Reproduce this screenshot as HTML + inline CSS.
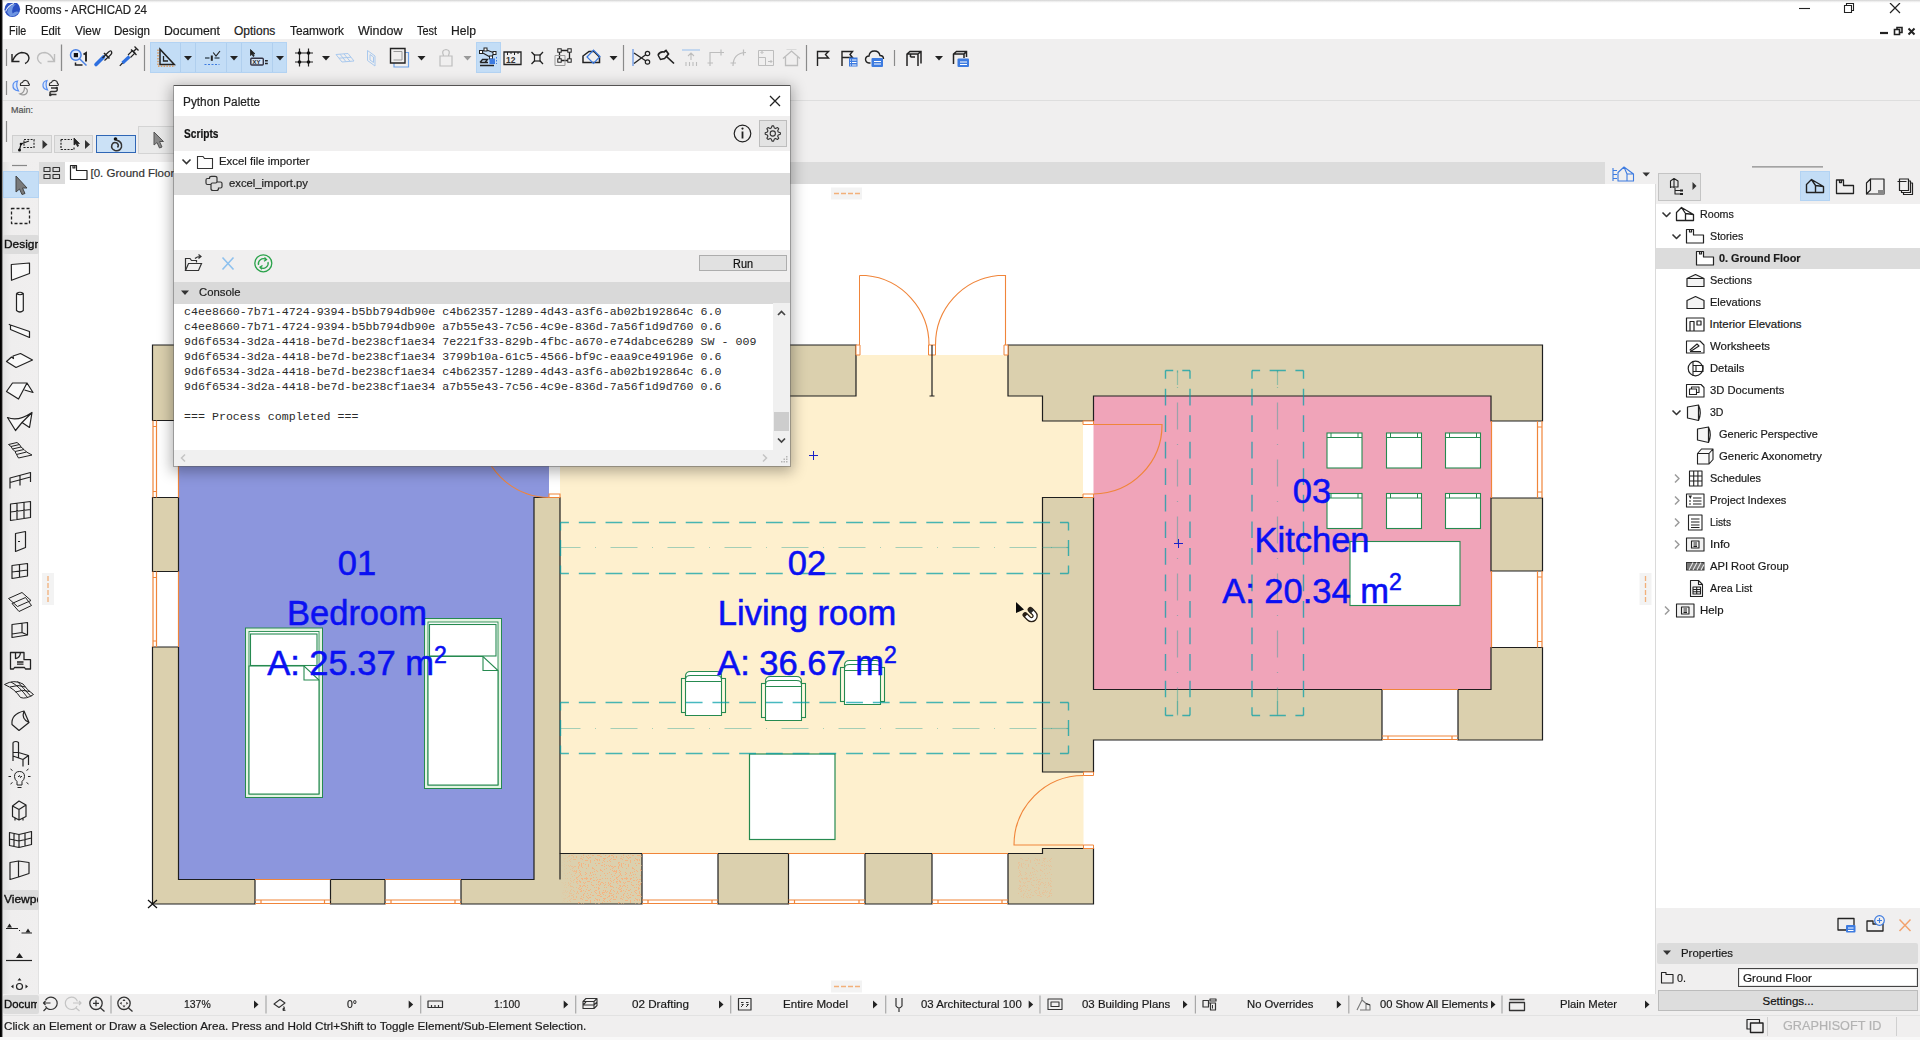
<!DOCTYPE html>
<html lang="en">
<head>
<meta charset="utf-8">
<title>Rooms - ARCHICAD 24</title>
<style>
*{box-sizing:border-box;margin:0;padding:0}
html,body{width:1920px;height:1040px;overflow:hidden;background:#fff}
body{position:relative;font-family:"Liberation Sans",sans-serif;font-size:12px;color:#1a1a1a}
.abs{position:absolute}
.t{position:absolute;white-space:nowrap;line-height:1;transform-origin:0 50%;-webkit-text-stroke:0.2px currentColor}
#chrome{left:0;top:39px;width:1920px;height:123px;background:#f0efef}
#leftedge{left:0;top:0;width:3px;height:1037px;background:linear-gradient(90deg,#000 0,#000 45%,#d5d5d5 100%)}
#topedge{left:0;top:0;width:1920px;height:3px;background:linear-gradient(180deg,#d2d2d2 0,#f4f4f4 60%,#fff 100%)}
#toolbox{left:3px;top:162px;width:36px;height:832px;background:linear-gradient(90deg,#e2e2e2 0,#efeeee 22%,#f0efef 100%)}
#tabbar{left:39px;top:162px;width:1616px;height:22px;background:#dcdcdc}
#canvas{left:39px;top:184px;width:1616px;height:810px;background:#fff}
#rpanel{left:1655px;top:162px;width:265px;height:853px;background:#f0efef}
#bottombar{left:3px;top:994px;width:1652px;height:22px;background:#f0efef}
#statusbar{left:0;top:1015px;width:1920px;height:25px;background:#f0efef}
svg{position:absolute;left:0;top:0;overflow:visible}
</style>
</head>
<body>
<!-- TITLE + MENU -->
<div class="abs" id="titlebar" style="left:0;top:0;width:1920px;height:39px;background:#fff"></div>
<div class="abs" id="chrome"></div>
<div class="abs" id="tabbar"></div>
<div class="abs" id="canvas"></div>
<div class="abs" id="toolbox"></div>
<div class="abs" id="rpanel"></div>
<div class="abs" id="bottombar"></div>
<div class="abs" id="statusbar"></div>
<svg id="plan" width="1920" height="1040" viewBox="0 0 1920 1040">
<path d="M178.5 396H549V497.5H534V879.5H178.5Z" fill="#8c96dd"/>
<path d="M560 396H856V355H1008V396H1042.5V421H1083V497.5H1042.5V772H1083.5V848.5H1042.5V853.5H560Z" fill="#fef0ce"/>
<rect x="1093.5" y="396" width="397.5" height="293.5" fill="#f0a4b9"/>
<path d="M152.5 345 L856 345 L856 396 L178.5 396 L178.5 420.5 L152.5 420.5Z" fill="#dbd0ae" stroke="#1e1e1e" stroke-width="1.2" stroke-linejoin="miter"/>
<path d="M152.5 497.5 L178.5 497.5 L178.5 571.5 L152.5 571.5Z" fill="#dbd0ae" stroke="#1e1e1e" stroke-width="1.2" stroke-linejoin="miter"/>
<path d="M152.5 647 L178.5 647 L178.5 879.5 L255 879.5 L255 904 L152.5 904Z" fill="#dbd0ae" stroke="#1e1e1e" stroke-width="1.2" stroke-linejoin="miter"/>
<path d="M330.5 879.5 L385 879.5 L385 904 L330.5 904Z" fill="#dbd0ae" stroke="#1e1e1e" stroke-width="1.2" stroke-linejoin="miter"/>
<path d="M461 879.5 L534 879.5 L534 497.5 L560 497.5 L560 853.5 L642 853.5 L642 904 L461 904Z" fill="#dbd0ae" stroke="#1e1e1e" stroke-width="1.2" stroke-linejoin="miter"/>
<path d="M560 853.5V879.5" stroke="#1e1e1e" stroke-width="1.2"/>
<path d="M718 853.5 L788.5 853.5 L788.5 904 L718 904Z" fill="#dbd0ae" stroke="#1e1e1e" stroke-width="1.2" stroke-linejoin="miter"/>
<path d="M865 853.5 L932 853.5 L932 904 L865 904Z" fill="#dbd0ae" stroke="#1e1e1e" stroke-width="1.2" stroke-linejoin="miter"/>
<path d="M1008 853.5 L1042.5 853.5 L1042.5 848.5 L1093.5 848.5 L1093.5 904 L1008 904Z" fill="#dbd0ae" stroke="#1e1e1e" stroke-width="1.2" stroke-linejoin="miter"/>
<path d="M1008 345 L1542.5 345 L1542.5 421 L1491 421 L1491 396 L1093.5 396 L1093.5 421 L1042.5 421 L1042.5 396 L1008 396Z" fill="#dbd0ae" stroke="#1e1e1e" stroke-width="1.2" stroke-linejoin="miter"/>
<path d="M1042.5 497.5 L1093.5 497.5 L1093.5 689.5 L1382 689.5 L1382 740 L1093.5 740 L1093.5 772 L1042.5 772Z" fill="#dbd0ae" stroke="#1e1e1e" stroke-width="1.2" stroke-linejoin="miter"/>
<path d="M1491 498 L1542.5 498 L1542.5 571 L1491 571Z" fill="#dbd0ae" stroke="#1e1e1e" stroke-width="1.2" stroke-linejoin="miter"/>
<path d="M1491 647.5 L1542.5 647.5 L1542.5 740 L1458 740 L1458 689.5 L1491 689.5Z" fill="#dbd0ae" stroke="#1e1e1e" stroke-width="1.2" stroke-linejoin="miter"/>
<defs><pattern id="stip" width="40" height="40" patternUnits="userSpaceOnUse"><g fill="#f4b483"><rect x="15" y="19" width="1" height="1"/><rect x="6" y="25" width="1" height="1"/><rect x="30" y="9" width="1" height="1"/><rect x="5" y="4" width="1" height="1"/><rect x="1" y="25" width="1" height="1"/><rect x="35" y="18" width="1" height="1"/><rect x="3" y="14" width="1" height="1"/><rect x="33" y="34" width="1" height="1"/><rect x="23" y="17" width="1" height="1"/><rect x="11" y="6" width="1" height="1"/><rect x="16" y="13" width="1" height="1"/><rect x="1" y="16" width="1" height="1"/><rect x="17" y="12" width="1" height="1"/><rect x="10" y="19" width="1" height="1"/><rect x="18" y="23" width="1" height="1"/><rect x="5" y="38" width="1" height="1"/><rect x="21" y="24" width="1" height="1"/><rect x="32" y="15" width="1" height="1"/><rect x="11" y="15" width="1" height="1"/><rect x="30" y="17" width="1" height="1"/><rect x="5" y="35" width="1" height="1"/><rect x="19" y="0" width="1" height="1"/><rect x="18" y="36" width="1" height="1"/><rect x="19" y="32" width="1" height="1"/><rect x="12" y="26" width="1" height="1"/><rect x="27" y="38" width="1" height="1"/><rect x="18" y="27" width="1" height="1"/><rect x="28" y="10" width="1" height="1"/><rect x="14" y="19" width="1" height="1"/><rect x="16" y="2" width="1" height="1"/><rect x="5" y="2" width="1" height="1"/><rect x="29" y="17" width="1" height="1"/><rect x="33" y="34" width="1" height="1"/><rect x="30" y="21" width="1" height="1"/><rect x="9" y="12" width="1" height="1"/><rect x="4" y="26" width="1" height="1"/><rect x="12" y="28" width="1" height="1"/><rect x="17" y="11" width="1" height="1"/><rect x="22" y="27" width="1" height="1"/><rect x="37" y="20" width="1" height="1"/><rect x="35" y="12" width="1" height="1"/><rect x="20" y="6" width="1" height="1"/><rect x="3" y="14" width="1" height="1"/><rect x="17" y="37" width="1" height="1"/><rect x="39" y="15" width="1" height="1"/><rect x="7" y="21" width="1" height="1"/><rect x="11" y="18" width="1" height="1"/><rect x="29" y="1" width="1" height="1"/><rect x="2" y="22" width="1" height="1"/><rect x="5" y="18" width="1" height="1"/><rect x="20" y="1" width="1" height="1"/><rect x="20" y="18" width="1" height="1"/><rect x="20" y="9" width="1" height="1"/><rect x="26" y="39" width="1" height="1"/><rect x="4" y="18" width="1" height="1"/><rect x="39" y="12" width="1" height="1"/><rect x="28" y="18" width="1" height="1"/><rect x="8" y="16" width="1" height="1"/><rect x="24" y="38" width="1" height="1"/><rect x="10" y="21" width="1" height="1"/><rect x="36" y="0" width="1" height="1"/><rect x="23" y="2" width="1" height="1"/><rect x="29" y="10" width="1" height="1"/><rect x="23" y="23" width="1" height="1"/><rect x="18" y="36" width="1" height="1"/><rect x="6" y="28" width="1" height="1"/><rect x="13" y="27" width="1" height="1"/><rect x="13" y="7" width="1" height="1"/><rect x="3" y="3" width="1" height="1"/><rect x="3" y="10" width="1" height="1"/><rect x="38" y="9" width="1" height="1"/><rect x="38" y="2" width="1" height="1"/><rect x="34" y="31" width="1" height="1"/><rect x="37" y="15" width="1" height="1"/><rect x="20" y="2" width="1" height="1"/><rect x="7" y="33" width="1" height="1"/><rect x="18" y="26" width="1" height="1"/><rect x="12" y="30" width="1" height="1"/><rect x="12" y="15" width="1" height="1"/><rect x="28" y="26" width="1" height="1"/><rect x="31" y="2" width="1" height="1"/><rect x="14" y="26" width="1" height="1"/><rect x="28" y="15" width="1" height="1"/><rect x="27" y="13" width="1" height="1"/><rect x="31" y="12" width="1" height="1"/><rect x="2" y="2" width="1" height="1"/><rect x="16" y="16" width="1" height="1"/><rect x="15" y="33" width="1" height="1"/><rect x="13" y="14" width="1" height="1"/><rect x="26" y="16" width="1" height="1"/><rect x="9" y="20" width="1" height="1"/><rect x="3" y="20" width="1" height="1"/><rect x="36" y="7" width="1" height="1"/><rect x="36" y="25" width="1" height="1"/><rect x="2" y="31" width="1" height="1"/><rect x="24" y="5" width="1" height="1"/><rect x="27" y="13" width="1" height="1"/><rect x="36" y="10" width="1" height="1"/><rect x="21" y="18" width="1" height="1"/><rect x="30" y="20" width="1" height="1"/><rect x="26" y="33" width="1" height="1"/><rect x="13" y="17" width="1" height="1"/><rect x="21" y="25" width="1" height="1"/><rect x="31" y="4" width="1" height="1"/><rect x="17" y="12" width="1" height="1"/><rect x="2" y="25" width="1" height="1"/><rect x="39" y="8" width="1" height="1"/><rect x="17" y="3" width="1" height="1"/><rect x="10" y="29" width="1" height="1"/><rect x="36" y="30" width="1" height="1"/><rect x="25" y="24" width="1" height="1"/><rect x="13" y="0" width="1" height="1"/><rect x="13" y="10" width="1" height="1"/><rect x="0" y="39" width="1" height="1"/><rect x="16" y="7" width="1" height="1"/><rect x="25" y="24" width="1" height="1"/><rect x="14" y="35" width="1" height="1"/><rect x="3" y="12" width="1" height="1"/><rect x="10" y="38" width="1" height="1"/><rect x="21" y="35" width="1" height="1"/><rect x="30" y="33" width="1" height="1"/><rect x="28" y="1" width="1" height="1"/><rect x="5" y="2" width="1" height="1"/><rect x="38" y="7" width="1" height="1"/><rect x="31" y="35" width="1" height="1"/><rect x="16" y="38" width="1" height="1"/><rect x="8" y="2" width="1" height="1"/><rect x="23" y="5" width="1" height="1"/><rect x="33" y="0" width="1" height="1"/><rect x="19" y="22" width="1" height="1"/><rect x="4" y="5" width="1" height="1"/><rect x="34" y="29" width="1" height="1"/><rect x="24" y="13" width="1" height="1"/><rect x="19" y="24" width="1" height="1"/><rect x="14" y="31" width="1" height="1"/><rect x="25" y="6" width="1" height="1"/><rect x="4" y="7" width="1" height="1"/><rect x="39" y="23" width="1" height="1"/><rect x="32" y="27" width="1" height="1"/><rect x="26" y="28" width="1" height="1"/><rect x="4" y="12" width="1" height="1"/><rect x="19" y="30" width="1" height="1"/><rect x="27" y="7" width="1" height="1"/><rect x="35" y="10" width="1" height="1"/><rect x="23" y="10" width="1" height="1"/><rect x="11" y="9" width="1" height="1"/><rect x="20" y="31" width="1" height="1"/><rect x="21" y="16" width="1" height="1"/><rect x="34" y="0" width="1" height="1"/><rect x="10" y="0" width="1" height="1"/><rect x="19" y="7" width="1" height="1"/><rect x="34" y="7" width="1" height="1"/><rect x="31" y="38" width="1" height="1"/><rect x="30" y="33" width="1" height="1"/><rect x="4" y="33" width="1" height="1"/><rect x="15" y="26" width="1" height="1"/><rect x="18" y="22" width="1" height="1"/><rect x="14" y="11" width="1" height="1"/><rect x="0" y="3" width="1" height="1"/><rect x="39" y="20" width="1" height="1"/><rect x="34" y="29" width="1" height="1"/><rect x="36" y="19" width="1" height="1"/><rect x="32" y="28" width="1" height="1"/><rect x="39" y="39" width="1" height="1"/><rect x="28" y="25" width="1" height="1"/><rect x="9" y="16" width="1" height="1"/><rect x="38" y="23" width="1" height="1"/><rect x="21" y="8" width="1" height="1"/><rect x="27" y="5" width="1" height="1"/><rect x="38" y="9" width="1" height="1"/><rect x="39" y="11" width="1" height="1"/><rect x="18" y="23" width="1" height="1"/><rect x="12" y="36" width="1" height="1"/><rect x="22" y="39" width="1" height="1"/><rect x="5" y="4" width="1" height="1"/><rect x="25" y="11" width="1" height="1"/><rect x="21" y="23" width="1" height="1"/><rect x="20" y="11" width="1" height="1"/><rect x="19" y="1" width="1" height="1"/><rect x="38" y="1" width="1" height="1"/><rect x="33" y="5" width="1" height="1"/><rect x="22" y="6" width="1" height="1"/><rect x="10" y="11" width="1" height="1"/><rect x="37" y="31" width="1" height="1"/><rect x="36" y="4" width="1" height="1"/><rect x="7" y="11" width="1" height="1"/><rect x="30" y="14" width="1" height="1"/><rect x="39" y="19" width="1" height="1"/><rect x="25" y="38" width="1" height="1"/><rect x="15" y="31" width="1" height="1"/><rect x="14" y="19" width="1" height="1"/><rect x="23" y="14" width="1" height="1"/><rect x="20" y="34" width="1" height="1"/><rect x="33" y="28" width="1" height="1"/><rect x="25" y="32" width="1" height="1"/><rect x="25" y="20" width="1" height="1"/><rect x="18" y="28" width="1" height="1"/><rect x="26" y="37" width="1" height="1"/><rect x="0" y="16" width="1" height="1"/><rect x="11" y="34" width="1" height="1"/><rect x="29" y="35" width="1" height="1"/><rect x="39" y="23" width="1" height="1"/><rect x="25" y="24" width="1" height="1"/><rect x="39" y="1" width="1" height="1"/><rect x="9" y="32" width="1" height="1"/><rect x="4" y="29" width="1" height="1"/><rect x="22" y="38" width="1" height="1"/><rect x="19" y="5" width="1" height="1"/><rect x="16" y="30" width="1" height="1"/><rect x="14" y="30" width="1" height="1"/><rect x="38" y="4" width="1" height="1"/><rect x="9" y="15" width="1" height="1"/><rect x="4" y="19" width="1" height="1"/><rect x="8" y="3" width="1" height="1"/><rect x="10" y="25" width="1" height="1"/><rect x="37" y="39" width="1" height="1"/><rect x="35" y="34" width="1" height="1"/><rect x="16" y="1" width="1" height="1"/><rect x="33" y="15" width="1" height="1"/><rect x="10" y="6" width="1" height="1"/><rect x="13" y="2" width="1" height="1"/><rect x="20" y="5" width="1" height="1"/><rect x="7" y="17" width="1" height="1"/><rect x="3" y="18" width="1" height="1"/><rect x="39" y="11" width="1" height="1"/><rect x="9" y="26" width="1" height="1"/><rect x="8" y="5" width="1" height="1"/><rect x="35" y="23" width="1" height="1"/><rect x="0" y="35" width="1" height="1"/><rect x="9" y="32" width="1" height="1"/><rect x="26" y="9" width="1" height="1"/><rect x="13" y="19" width="1" height="1"/><rect x="30" y="32" width="1" height="1"/><rect x="4" y="24" width="1" height="1"/><rect x="10" y="10" width="1" height="1"/><rect x="16" y="32" width="1" height="1"/><rect x="25" y="34" width="1" height="1"/><rect x="19" y="25" width="1" height="1"/><rect x="21" y="10" width="1" height="1"/><rect x="24" y="3" width="1" height="1"/><rect x="27" y="1" width="1" height="1"/><rect x="17" y="1" width="1" height="1"/><rect x="19" y="9" width="1" height="1"/><rect x="5" y="10" width="1" height="1"/><rect x="7" y="38" width="1" height="1"/><rect x="0" y="14" width="1" height="1"/><rect x="14" y="35" width="1" height="1"/><rect x="0" y="30" width="1" height="1"/><rect x="34" y="11" width="1" height="1"/><rect x="28" y="24" width="1" height="1"/><rect x="21" y="11" width="1" height="1"/><rect x="33" y="37" width="1" height="1"/><rect x="12" y="6" width="1" height="1"/><rect x="30" y="39" width="1" height="1"/><rect x="22" y="19" width="1" height="1"/><rect x="26" y="38" width="1" height="1"/><rect x="2" y="13" width="1" height="1"/><rect x="16" y="37" width="1" height="1"/><rect x="37" y="19" width="1" height="1"/><rect x="30" y="21" width="1" height="1"/><rect x="5" y="15" width="1" height="1"/><rect x="20" y="6" width="1" height="1"/><rect x="2" y="38" width="1" height="1"/><rect x="20" y="33" width="1" height="1"/><rect x="30" y="22" width="1" height="1"/><rect x="5" y="11" width="1" height="1"/><rect x="2" y="31" width="1" height="1"/><rect x="33" y="34" width="1" height="1"/><rect x="38" y="15" width="1" height="1"/><rect x="2" y="12" width="1" height="1"/><rect x="4" y="21" width="1" height="1"/><rect x="38" y="8" width="1" height="1"/><rect x="19" y="7" width="1" height="1"/><rect x="32" y="32" width="1" height="1"/><rect x="0" y="4" width="1" height="1"/><rect x="14" y="39" width="1" height="1"/><rect x="17" y="39" width="1" height="1"/><rect x="1" y="2" width="1" height="1"/><rect x="0" y="30" width="1" height="1"/><rect x="9" y="13" width="1" height="1"/><rect x="23" y="15" width="1" height="1"/><rect x="22" y="19" width="1" height="1"/><rect x="24" y="38" width="1" height="1"/><rect x="25" y="2" width="1" height="1"/><rect x="11" y="26" width="1" height="1"/><rect x="31" y="4" width="1" height="1"/><rect x="32" y="32" width="1" height="1"/><rect x="19" y="35" width="1" height="1"/><rect x="18" y="13" width="1" height="1"/><rect x="27" y="20" width="1" height="1"/><rect x="11" y="13" width="1" height="1"/><rect x="1" y="30" width="1" height="1"/><rect x="27" y="17" width="1" height="1"/><rect x="21" y="26" width="1" height="1"/><rect x="26" y="20" width="1" height="1"/><rect x="39" y="13" width="1" height="1"/><rect x="16" y="17" width="1" height="1"/><rect x="32" y="5" width="1" height="1"/><rect x="1" y="25" width="1" height="1"/><rect x="16" y="38" width="1" height="1"/><rect x="18" y="8" width="1" height="1"/><rect x="39" y="20" width="1" height="1"/><rect x="5" y="10" width="1" height="1"/><rect x="39" y="5" width="1" height="1"/><rect x="13" y="16" width="1" height="1"/><rect x="13" y="31" width="1" height="1"/><rect x="7" y="21" width="1" height="1"/><rect x="0" y="29" width="1" height="1"/><rect x="36" y="13" width="1" height="1"/><rect x="10" y="5" width="1" height="1"/><rect x="15" y="33" width="1" height="1"/><rect x="6" y="7" width="1" height="1"/><rect x="20" y="18" width="1" height="1"/><rect x="36" y="37" width="1" height="1"/><rect x="9" y="4" width="1" height="1"/><rect x="11" y="1" width="1" height="1"/><rect x="11" y="13" width="1" height="1"/><rect x="16" y="2" width="1" height="1"/><rect x="37" y="20" width="1" height="1"/><rect x="21" y="38" width="1" height="1"/><rect x="23" y="10" width="1" height="1"/><rect x="10" y="13" width="1" height="1"/><rect x="3" y="3" width="1" height="1"/><rect x="10" y="3" width="1" height="1"/><rect x="16" y="31" width="1" height="1"/><rect x="6" y="12" width="1" height="1"/><rect x="8" y="25" width="1" height="1"/><rect x="30" y="38" width="1" height="1"/><rect x="34" y="31" width="1" height="1"/><rect x="34" y="20" width="1" height="1"/></g></pattern><linearGradient id="fadeL" x1="0" x2="1"><stop offset="0" stop-color="#fff" stop-opacity="0"/><stop offset=".25" stop-color="#fff"/><stop offset="1" stop-color="#fff"/></linearGradient><mask id="m1"><rect x="560" y="854" width="82" height="50" fill="url(#fadeL)"/></mask></defs>
<rect x="561" y="854.5" width="80.500" height="49" fill="url(#stip)" mask="url(#m1)"/>
<rect x="1018" y="858" width="34" height="40" fill="url(#stip)" opacity=".45"/>
<path d="M255 879.5H330.5M255 900H330.5M255 903.5H330.5M261 900V903.5M324.5 900V903.5" stroke="#f0853a" stroke-width="1.2" fill="none"/>
<path d="M385 879.5H461M385 900H461M385 903.5H461M391 900V903.5M455 900V903.5" stroke="#f0853a" stroke-width="1.2" fill="none"/>
<path d="M642 853.5H718M642 900H718M642 903.5H718M648 900V903.5M712 900V903.5" stroke="#f0853a" stroke-width="1.2" fill="none"/>
<path d="M788.5 853.5H865M788.5 900H865M788.5 903.5H865M794.5 900V903.5M859 900V903.5" stroke="#f0853a" stroke-width="1.2" fill="none"/>
<path d="M932 853.5H1008M932 900H1008M932 903.5H1008M938 900V903.5M1002 900V903.5" stroke="#f0853a" stroke-width="1.2" fill="none"/>
<path d="M1382 689.5H1458M1382 736H1458M1382 739.5H1458M1388 736V739.5M1452 736V739.5" stroke="#f0853a" stroke-width="1.2" fill="none"/>
<path d="M178.5 420.5V497.5M153 420.5V497.5M156.5 420.5V497.5M153 426.5H156.5M153 491.5H156.5" stroke="#f0853a" stroke-width="1.2" fill="none"/>
<path d="M178.5 571.5V647M153 571.5V647M156.5 571.5V647M153 577.5H156.5M153 641H156.5" stroke="#f0853a" stroke-width="1.2" fill="none"/>
<path d="M1491.5 421V498M1542 421V498M1537.5 421V498M1542 427H1537.5M1542 492H1537.5" stroke="#f0853a" stroke-width="1.2" fill="none"/>
<path d="M1491.5 571V647.5M1542 571V647.5M1537.5 571V647.5M1542 577H1537.5M1542 641.5H1537.5" stroke="#f0853a" stroke-width="1.2" fill="none"/>
<path d="M856 345H860V355H856ZM928.5 345H935.5V355H928.5ZM1004 345H1008V355H1004Z" fill="#fff" stroke="#f0853a" stroke-width="1"/>
<path d="M859.5 345V275.5H866M859.5 275.5" stroke="#f0853a" fill="none"/>
<path d="M866 275.5A69.5 69.5 0 0 1 929 345M998 275.5A69.5 69.5 0 0 0 935.5 345M998 275.5H1005.5V345" stroke="#f0853a" fill="none" stroke-width="1.1"/>
<path d="M932 345V396M929.5 396H934.5" stroke="#1e1e1e" stroke-width="1.2" fill="none"/>
<path d="M1083 421H1093.5V424.5H1083ZM1083 494H1093.5V497.5H1083Z" fill="#fff" stroke="#f0853a" stroke-width="1"/>
<path d="M1093.5 424.5H1162A69 69 0 0 1 1093.5 494" stroke="#f0853a" fill="none" stroke-width="1.2"/>
<path d="M1083.5 772H1093.5V775.5H1083.5ZM1083.5 845H1093.5V848.5H1083.5Z" fill="#fff" stroke="#f0853a" stroke-width="1"/>
<path d="M1083.5 775.5A69.5 69.5 0 0 0 1014 845H1083.5" stroke="#f0853a" fill="none" stroke-width="1.1"/>
<path d="M549 497.5A70 70 0 0 1 480 428M549 494H560V497.5H549Z" stroke="#f0853a" fill="none" stroke-width="1.1"/>
<rect x="245.5" y="628" width="77" height="169.5" fill="#e4f5e2" stroke="#268a50" stroke-width="1"/>
<rect x="249.0" y="631.5" width="70" height="162.5" fill="#fff" stroke="#268a50" stroke-width="0.9"/>
<rect x="250.5" y="634" width="66.5" height="31.5" fill="#fff" stroke="#268a50" stroke-width="1.1"/>
<path d="M249.0 666H304.0L319.0 680V794.0H249.0Z" fill="#fff" stroke="#268a50" stroke-width="1.1"/>
<path d="M304.0 666V680H319.0" fill="none" stroke="#268a50" stroke-width="1.1"/>
<rect x="424.5" y="618.5" width="77" height="170" fill="#e4f5e2" stroke="#268a50" stroke-width="1"/>
<rect x="428.0" y="622.0" width="70" height="163" fill="#fff" stroke="#268a50" stroke-width="0.9"/>
<rect x="429.5" y="624.5" width="66.5" height="31.5" fill="#fff" stroke="#268a50" stroke-width="1.1"/>
<path d="M428.0 656.5H483.0L498.0 670.5V785.0H428.0Z" fill="#fff" stroke="#268a50" stroke-width="1.1"/>
<path d="M483.0 656.5V670.5H498.0" fill="none" stroke="#268a50" stroke-width="1.1"/>
<rect x="681.5" y="678.5" width="44" height="34" fill="#fff8e2" stroke="#268a50" stroke-width="1.1"/>
<path d="M685.5 715.5V676.5Q685.5 671.5 690.5 671.5H716.5Q721.5 671.5 721.5 676.5V715.5Z" fill="#fff" stroke="#268a50" stroke-width="1.1"/>
<path d="M685.5 679.5Q685.5 675.5 690.5 675.5H716.5Q721.5 675.5 721.5 679.5M685.5 681.5H721.5" fill="none" stroke="#268a50" stroke-width="1.1"/>
<rect x="761.5" y="683.5" width="44" height="34" fill="#fff8e2" stroke="#268a50" stroke-width="1.1"/>
<path d="M765.5 720.5V681.5Q765.5 676.5 770.5 676.5H796.5Q801.5 676.5 801.5 681.5V720.5Z" fill="#fff" stroke="#268a50" stroke-width="1.1"/>
<path d="M765.5 684.5Q765.5 680.5 770.5 680.5H796.5Q801.5 680.5 801.5 684.5M765.5 686.5H801.5" fill="none" stroke="#268a50" stroke-width="1.1"/>
<rect x="840.5" y="667.5" width="44" height="34" fill="#fff8e2" stroke="#268a50" stroke-width="1.1"/>
<path d="M844.5 704.5V665.5Q844.5 660.5 849.5 660.5H875.5Q880.5 660.5 880.5 665.5V704.5Z" fill="#fff" stroke="#268a50" stroke-width="1.1"/>
<path d="M844.5 668.5Q844.5 664.5 849.5 664.5H875.5Q880.5 664.5 880.5 668.5M844.5 670.5H880.5" fill="none" stroke="#268a50" stroke-width="1.1"/>
<rect x="749.5" y="754" width="85.5" height="85.5" fill="#fff" stroke="#268a50" stroke-width="1.2"/>
<rect x="1327" y="433" width="35" height="35" fill="#fff" stroke="#268a50" stroke-width="1.1"/>
<path d="M1327 437.5H1362M1331 433V437.5M1358 433V437.5" stroke="#268a50" stroke-width="1" fill="none"/>
<rect x="1327" y="493.5" width="35" height="35" fill="#fff" stroke="#268a50" stroke-width="1.1"/>
<path d="M1327 498.0H1362M1331 493.5V498.0M1358 493.5V498.0" stroke="#268a50" stroke-width="1" fill="none"/>
<rect x="1386.5" y="433" width="35" height="35" fill="#fff" stroke="#268a50" stroke-width="1.1"/>
<path d="M1386.5 437.5H1421.5M1390.5 433V437.5M1417.5 433V437.5" stroke="#268a50" stroke-width="1" fill="none"/>
<rect x="1386.5" y="493.5" width="35" height="35" fill="#fff" stroke="#268a50" stroke-width="1.1"/>
<path d="M1386.5 498.0H1421.5M1390.5 493.5V498.0M1417.5 493.5V498.0" stroke="#268a50" stroke-width="1" fill="none"/>
<rect x="1445.5" y="433" width="35" height="35" fill="#fff" stroke="#268a50" stroke-width="1.1"/>
<path d="M1445.5 437.5H1480.5M1449.5 433V437.5M1476.5 433V437.5" stroke="#268a50" stroke-width="1" fill="none"/>
<rect x="1445.5" y="493.5" width="35" height="35" fill="#fff" stroke="#268a50" stroke-width="1.1"/>
<path d="M1445.5 498.0H1480.5M1449.5 493.5V498.0M1476.5 493.5V498.0" stroke="#268a50" stroke-width="1" fill="none"/>
<rect x="1350" y="541.5" width="110" height="64" fill="#fff" stroke="#268a50" stroke-width="1.1"/>
<path d="M560.5 522.5L1068.5 522.5" stroke="rgba(0,158,168,0.72)" stroke-width="1.4" fill="none" stroke-dasharray="16.83 9.90" stroke-dashoffset="8.42"/>
<path d="M560.5 573.5L1068.5 573.5" stroke="rgba(0,158,168,0.72)" stroke-width="1.4" fill="none" stroke-dasharray="16.83 9.90" stroke-dashoffset="8.42"/>
<path d="M1068.5 522.5L1068.5 573.5" stroke="rgba(0,158,168,0.72)" stroke-width="1.4" fill="none" stroke-dasharray="16.06 9.44" stroke-dashoffset="8.03"/>
<path d="M560.5 522.5L560.5 573.5" stroke="rgba(0,158,168,0.72)" stroke-width="1.4" fill="none" stroke-dasharray="16.06 9.44" stroke-dashoffset="8.03"/>
<path d="M1068.5 547.5L560.5 547.5" stroke="rgba(40,160,150,0.42)" stroke-width="1.2" fill="none" stroke-dasharray="27 14.5 1 14.5" stroke-dashoffset="-32"/>
<path d="M1042.5 547.5H1068.500" stroke="rgba(40,160,150,0.42)" stroke-width="1.2"/>
<path d="M560.5 702.5L1068.5 702.5" stroke="rgba(0,158,168,0.72)" stroke-width="1.4" fill="none" stroke-dasharray="16.83 9.90" stroke-dashoffset="8.42"/>
<path d="M560.5 753.5L1068.5 753.5" stroke="rgba(0,158,168,0.72)" stroke-width="1.4" fill="none" stroke-dasharray="16.83 9.90" stroke-dashoffset="8.42"/>
<path d="M1068.5 702.5L1068.5 753.5" stroke="rgba(0,158,168,0.72)" stroke-width="1.4" fill="none" stroke-dasharray="16.06 9.44" stroke-dashoffset="8.03"/>
<path d="M560.5 702.5L560.5 753.5" stroke="rgba(0,158,168,0.72)" stroke-width="1.4" fill="none" stroke-dasharray="16.06 9.44" stroke-dashoffset="8.03"/>
<path d="M1068.5 728.5L560.5 728.5" stroke="rgba(40,160,150,0.42)" stroke-width="1.2" fill="none" stroke-dasharray="27 14.5 1 14.5" stroke-dashoffset="-32"/>
<path d="M1042.5 728.5H1068.500" stroke="rgba(40,160,150,0.42)" stroke-width="1.2"/>
<path d="M1165.5 370.5L1165.5 715.5" stroke="rgba(0,158,168,0.72)" stroke-width="1.4" fill="none" stroke-dasharray="16.71 9.83" stroke-dashoffset="8.35"/>
<path d="M1190 370.5L1190 715.5" stroke="rgba(0,158,168,0.72)" stroke-width="1.4" fill="none" stroke-dasharray="16.71 9.83" stroke-dashoffset="8.35"/>
<path d="M1165.5 370.5L1190 370.5" stroke="rgba(0,158,168,0.72)" stroke-width="1.4" fill="none" stroke-dasharray="15.43 9.07" stroke-dashoffset="7.71"/>
<path d="M1165.5 715.5L1190 715.5" stroke="rgba(0,158,168,0.72)" stroke-width="1.4" fill="none" stroke-dasharray="15.43 9.07" stroke-dashoffset="7.71"/>
<path d="M1177.5 370.5L1177.5 715.5" stroke="rgba(40,160,150,0.42)" stroke-width="1.2" fill="none" stroke-dasharray="27 14.5 1 14.5" stroke-dashoffset="-32"/>
<path d="M1177.5 370.5V385M1177.5 701V715.500" stroke="rgba(40,160,150,0.42)" stroke-width="1.2"/>
<path d="M1252 370.5L1252 715.5" stroke="rgba(0,158,168,0.72)" stroke-width="1.4" fill="none" stroke-dasharray="16.71 9.83" stroke-dashoffset="8.35"/>
<path d="M1303.5 370.5L1303.5 715.5" stroke="rgba(0,158,168,0.72)" stroke-width="1.4" fill="none" stroke-dasharray="16.71 9.83" stroke-dashoffset="8.35"/>
<path d="M1252 370.5L1303.5 370.5" stroke="rgba(0,158,168,0.72)" stroke-width="1.4" fill="none" stroke-dasharray="16.21 9.54" stroke-dashoffset="8.11"/>
<path d="M1252 715.5L1303.5 715.5" stroke="rgba(0,158,168,0.72)" stroke-width="1.4" fill="none" stroke-dasharray="16.21 9.54" stroke-dashoffset="8.11"/>
<path d="M1277.5 370.5L1277.5 715.5" stroke="rgba(40,160,150,0.42)" stroke-width="1.2" fill="none" stroke-dasharray="27 14.5 1 14.5" stroke-dashoffset="-32"/>
<path d="M1277.5 370.5V385M1277.5 701V715.500" stroke="rgba(40,160,150,0.42)" stroke-width="1.2"/>
<path d="M809 455.5H818M813.5 451V460M1174 543.5H1183M1178.5 539V548" stroke="#1a22c8" stroke-width="1" fill="none"/>
<path d="M148 900L157 908M157 900L148 908" stroke="#111" stroke-width="1.3"/>
<text x="357" y="575" text-anchor="middle" style="font-family:'Liberation Sans',sans-serif;font-size:34.5px;fill:#0a10f2;stroke:#0a10f2;stroke-width:0.55px">01</text>
<text x="357" y="624.5" text-anchor="middle" style="font-family:'Liberation Sans',sans-serif;font-size:34.5px;fill:#0a10f2;stroke:#0a10f2;stroke-width:0.55px">Bedroom</text>
<text x="357" y="675" text-anchor="middle" style="font-family:'Liberation Sans',sans-serif;font-size:34.5px;fill:#0a10f2;stroke:#0a10f2;stroke-width:0.55px">A: 25.37 m<tspan dy="-12.5" style="font-size:23px">2</tspan></text>
<text x="807" y="575" text-anchor="middle" style="font-family:'Liberation Sans',sans-serif;font-size:34.5px;fill:#0a10f2;stroke:#0a10f2;stroke-width:0.55px">02</text>
<text x="807" y="624.5" text-anchor="middle" style="font-family:'Liberation Sans',sans-serif;font-size:34.5px;fill:#0a10f2;stroke:#0a10f2;stroke-width:0.55px">Living room</text>
<text x="807" y="675" text-anchor="middle" style="font-family:'Liberation Sans',sans-serif;font-size:34.5px;fill:#0a10f2;stroke:#0a10f2;stroke-width:0.55px">A: 36.67 m<tspan dy="-12.5" style="font-size:23px">2</tspan></text>
<text x="1312" y="502.5" text-anchor="middle" style="font-family:'Liberation Sans',sans-serif;font-size:34.5px;fill:#0a10f2;stroke:#0a10f2;stroke-width:0.55px">03</text>
<text x="1312" y="552.0" text-anchor="middle" style="font-family:'Liberation Sans',sans-serif;font-size:34.5px;fill:#0a10f2;stroke:#0a10f2;stroke-width:0.55px">Kitchen</text>
<text x="1312" y="602.5" text-anchor="middle" style="font-family:'Liberation Sans',sans-serif;font-size:34.5px;fill:#0a10f2;stroke:#0a10f2;stroke-width:0.55px">A: 20.34 m<tspan dy="-12.5" style="font-size:23px">2</tspan></text>
<path d="M1016 602V613L1024 609.500Z" fill="#0a0a0a"/>
<path d="M1030.300 609.700L1034.050 613.450A3.600 3.600 0 0 1 1028.950 618.550L1025.200 614.800" fill="none" stroke="#2a2015" stroke-width="5.400" stroke-linecap="round"/>
<path d="M1031.200 610.600L1034.050 613.450A3.600 3.600 0 0 1 1028.950 618.550L1026.100 615.700" fill="none" stroke="#fff" stroke-width="2.800"/>
<path d="M1030.300 609.700L1032.400 611.800" fill="none" stroke="#2a2a2a" stroke-width="5.400"/>
</svg>
<div class="abs" style="left:3px;top:100px;width:1917px;height:1px;background:#dedede"></div>
<div class="t" style="left:25.0px;top:1.5px;height:16px;line-height:16px;font-size:12px;color:#222;transform:scaleX(0.958);">Rooms - ARCHICAD 24</div>
<div class="t" style="left:9.3px;top:22.5px;height:16px;line-height:16px;font-size:12px;color:#1c1c1c;transform:scaleX(0.890);">File</div>
<div class="t" style="left:41.0px;top:22.5px;height:16px;line-height:16px;font-size:12px;color:#1c1c1c;transform:scaleX(0.943);">Edit</div>
<div class="t" style="left:74.5px;top:22.5px;height:16px;line-height:16px;font-size:12px;color:#1c1c1c;transform:scaleX(0.989);">View</div>
<div class="t" style="left:113.5px;top:22.5px;height:16px;line-height:16px;font-size:12px;color:#1c1c1c;transform:scaleX(0.964);">Design</div>
<div class="t" style="left:163.5px;top:22.5px;height:16px;line-height:16px;font-size:12px;color:#1c1c1c;transform:scaleX(1.024);">Document</div>
<div class="t" style="left:234.0px;top:22.5px;height:16px;line-height:16px;font-size:12px;color:#1c1c1c;">Options</div>
<div class="t" style="left:290.0px;top:22.5px;height:16px;line-height:16px;font-size:12px;color:#1c1c1c;transform:scaleX(0.988);">Teamwork</div>
<div class="t" style="left:358.0px;top:22.5px;height:16px;line-height:16px;font-size:12px;color:#1c1c1c;transform:scaleX(1.043);">Window</div>
<div class="t" style="left:417.0px;top:22.5px;height:16px;line-height:16px;font-size:12px;color:#1c1c1c;transform:scaleX(0.909);">Test</div>
<div class="t" style="left:451.0px;top:22.5px;height:16px;line-height:16px;font-size:12px;color:#1c1c1c;transform:scaleX(1.013);">Help</div>
<div class="t" style="left:11.0px;top:104.0px;height:13px;line-height:13px;font-size:9px;color:#555;">Main:</div>
<div class="abs" style="left:150px;top:42px;width:137px;height:31px;background:#c3ddf6;border:1px solid #b3d3f3"></div>
<div class="abs" style="left:180.0px;top:43px;width:1px;height:29px;background:#b0cfee"></div>
<div class="abs" style="left:195.0px;top:43px;width:1px;height:29px;background:#b0cfee"></div>
<div class="abs" style="left:226.0px;top:43px;width:1px;height:29px;background:#b0cfee"></div>
<div class="abs" style="left:241.0px;top:43px;width:1px;height:29px;background:#b0cfee"></div>
<div class="abs" style="left:272.0px;top:43px;width:1px;height:29px;background:#b0cfee"></div>
<div class="abs" style="left:475.5px;top:42px;width:25px;height:31px;background:#c3ddf6;border:1px solid #b3d3f3"></div>
<div class="abs" style="left:12px;top:135px;width:39.5px;height:18px;background:#e6e6e6;border:1px solid #cfcfcf"></div>
<div class="abs" style="left:54px;top:135px;width:39px;height:18px;background:#e6e6e6;border:1px solid #cfcfcf"></div>
<div class="abs" style="left:96px;top:135px;width:39.5px;height:18px;background:#cbe1f6;border:1.5px solid #2f66b5"></div>
<div class="abs" style="left:138px;top:125.5px;width:40px;height:28px;background:#eaeaea;border:1px solid #d4d4d4"></div>
<svg width="1920" height="1040" viewBox="0 0 1920 1040">
<circle cx="12.300" cy="9.200" r="7.800" fill="#2a4fc2"/><path d="M7 12.500Q8 5 16 4Q11 7.500 12.500 13.500Q16 10.500 19 12Q16 17 10 16Z" fill="#7fa6ea" opacity=".8"/><path d="M5.500 11.500Q8 5.500 14 3.500" stroke="#dfe9fb" stroke-width="1.1" fill="none"/>
<path d="M1799 8.500H1810" stroke="#222" stroke-width="1.1" fill="none" />
<path d="M1844.500 5.500H1851.500V12.500H1844.500ZM1846.500 5.500V3.500H1853.500V10.500H1851.500" stroke="#222" stroke-width="1.1" fill="none" />
<path d="M1890 3L1900 13M1900 3L1890 13" stroke="#222" stroke-width="1.2" fill="none" />
<path d="M1880 33H1888" stroke="#222" stroke-width="2.2" fill="none" />
<path d="M1894.500 29.500H1899.500V34.500H1894.500ZM1897 29V27.500H1902V32.500H1900" stroke="#222" stroke-width="1.6" fill="none" />
<path d="M1908.500 28.500L1914.500 34.500M1914.500 28.500L1908.500 34.500" stroke="#222" stroke-width="2" fill="none" />
<path d="M6.500 49V66" stroke="#8a8a8a" stroke-width="1.2" fill="none" />
<path d="M6.500 81V95" stroke="#8a8a8a" stroke-width="1.2" fill="none" />
<path d="M6.500 121V142" stroke="#8a8a8a" stroke-width="1.2" fill="none" />
<path d="M12 54V61.500H19.500M12.500 61Q15.500 53.500 21.500 52.500Q28.500 52.500 29 58Q28.500 62 25 63.500" stroke="#222" stroke-width="1.4" fill="none" />
<path d="M54.500 54V61.500H47.500M54 61Q51 53.500 45 52.500Q38 52.500 37.500 58Q38 62 41.500 63.500" stroke="#bdbdbd" stroke-width="1.4" fill="none" />
<path d="M61.500 44.500V71" stroke="#8a8a8a" stroke-width="1.3" fill="none" />
<circle cx="75.800" cy="55" r="5.300" fill="#dbe7fb" stroke="#4a82e6" stroke-width="1.500"/><rect x="73.800" y="53" width="4.200" height="4.200" fill="#111"/>
<path d="M79.800 59L86.500 65.500" stroke="#4a82e6" stroke-width="1.5" fill="none" />
<path d="M83.500 54.500L86 53V61.500" stroke="#222" stroke-width="1.9" fill="none" />
<path d="M75.500 62.500V65H82.500" stroke="#222" stroke-width="1.5" fill="none" />
<path d="M96 64.500L103.500 57" stroke="#2d6fe0" stroke-width="3.6" fill="none" stroke-linecap="round"/>
<path d="M102.500 58L108 52.500Q110.500 50 111.500 51.500Q112.500 53.500 110 55.500L104.500 60.500" stroke="#222" stroke-width="1.2" fill="none" />
<path d="M104 53L109.500 58.500" stroke="#222" stroke-width="1.6" fill="none" />
<path d="M119.800 65.800L123 62.500" stroke="#222" stroke-width="1.2" fill="none" />
<path d="M122.500 63L129.500 56.500" stroke="#2d6fe0" stroke-width="3.2" fill="none" />
<path d="M128 55L132.500 50.500L135 53L130.500 57.500" stroke="#222" stroke-width="1.1" fill="none" />
<path d="M131 49.500L136.500 55M133.500 51.500L136.500 48.500M134.500 46.500L138.500 50.500" stroke="#222" stroke-width="1.3" fill="none" />
<path d="M144.500 45V71" stroke="#8a8a8a" stroke-width="1.2" fill="none" />
<path d="M160 49.200V64.500H174.300Z" stroke="#222" stroke-width="1.5" fill="none" />
<path d="M163.500 56V61H168" stroke="#222" stroke-width="1.3" fill="none" />
<path d="M158 66.200H175" stroke="#e08a3a" stroke-width="1.2" fill="none" stroke-dasharray="1.500 1.300"/>
<path d="M158 49.500V66" stroke="#e08a3a" stroke-width="1.2" fill="none" stroke-dasharray="1.500 1.300"/>
<path d="M184 56H192L188 60.5Z" fill="#222"/>
<path d="M205 58H209.500M214.500 58H219.500" stroke="#456" stroke-width="1.6" fill="none" />
<path d="M211.800 55.500V60.800" stroke="#222" stroke-width="2" fill="none" />
<path d="M213.200 52.500L216 56L220 51" stroke="#222" stroke-width="1.1" fill="none" />
<path d="M204.500 64.500H219.500" stroke="#3d7be0" stroke-width="1.2" fill="none" stroke-dasharray="2 1.500"/>
<path d="M230 56H238L234 60.5Z" fill="#222"/>
<path d="M250.500 49.500V55.500L252 54.300L253.200 56.500L254.200 56L253 53.800H255Z" stroke="#222" stroke-width="0.8" fill="#222" />
<rect x="250.800" y="58.300" width="12.500" height="6.700" rx="1" fill="#d3e3f5" stroke="#334" stroke-width="1.400"/>
<path d="M265 60.800H267.800M265 63.500H267.800" stroke="#222" stroke-width="1.5" fill="none" />
<text x="252.600" y="64" style="font-family:'Liberation Sans',sans-serif;font-size:5.800px;font-weight:bold;fill:#222">XY</text>
<path d="M276 56H284L280 60.5Z" fill="#222"/>
<path d="M295 53H313M295 62H313M299.500 48.500V66.500M308.500 48.500V66.500" stroke="#222" stroke-width="1.2" fill="none" />
<circle cx="299.5" cy="53" r="1.800" fill="#111"/>
<circle cx="308.5" cy="53" r="1.800" fill="#111"/>
<circle cx="299.5" cy="62" r="1.800" fill="#111"/>
<circle cx="308.5" cy="62" r="1.800" fill="#111"/>
<path d="M322 56H330L326 60.5Z" fill="#222"/>
<path d="M336 54.500L348 53.500L354 61L342 62Z M340 54.200L346 61.700M344 53.900L350 61.300M339 58.200L351 57.200" stroke="#a9c9ee" stroke-width="1" fill="none" />
<path d="M367.500 50.500L375 56V66L367.500 60.500Z M370 54.500L373.500 57V62.500L370 60Z" stroke="#a9c9ee" stroke-width="1" fill="none" />
<path d="M394 52.500H408.500V67H394Z" stroke="#6fa3e8" stroke-width="1.2" fill="none" />
<path d="M390.500 48.500H405V63H390.500Z" stroke="#222" stroke-width="1.4" fill="#f0efef" />
<path d="M393.500 51.500H402V60H393.500" stroke="#999" stroke-width="1" fill="none" />
<path d="M417.5 56H425.5L421.5 60.5Z" fill="#222"/>
<path d="M443.500 55.500Q441 50 446 49.500Q451 50 448.500 55.500M440 56H452V66H440Z" stroke="#bdbdbd" stroke-width="1.2" fill="none" />
<path d="M463.5 56H471.5L467.5 60.5Z" fill="#999"/>
<path d="M481 52L485.500 49.500L494.500 53L491 57.500Z" stroke="#222" stroke-width="1.1" fill="none" />
<rect x="479.5" y="50.5" width="3" height="3" fill="#fff" stroke="#222" stroke-width="1"/>
<rect x="484.0" y="48.0" width="3" height="3" fill="#fff" stroke="#222" stroke-width="1"/>
<rect x="493.0" y="51.5" width="3" height="3" fill="#fff" stroke="#222" stroke-width="1"/>
<rect x="489.5" y="56.0" width="3" height="3" fill="#fff" stroke="#222" stroke-width="1"/>
<rect x="489.500" y="58.500" width="5.500" height="5.500" fill="#3d7be0"/>
<path d="M480 62.500H488M480 62.500L482.500 59.500H487.500L485 62.500M480 65.500H494" stroke="#222" stroke-width="1.3" fill="none" />
<path d="M496.500 57V64" stroke="#3d7be0" stroke-width="1" fill="none" stroke-dasharray="1.500 1.500"/>
<path d="M504 52H521V64.500H504ZM504 64.500" stroke="#222" stroke-width="1.3" fill="none" />
<path d="M507.500 52V55M511 52V54M514.500 52V55M518 52V54" stroke="#222" stroke-width="1" fill="none" />
<text x="506" y="63" style="font-family:'Liberation Sans',sans-serif;font-size:8.500px;font-weight:bold;fill:#333">12</text>
<path d="M531.500 52L543 64M543 52L531.500 64" stroke="#222" stroke-width="1.3" fill="none" />
<rect x="534.500" y="55" width="5.500" height="6" fill="#f0efef" stroke="#222" stroke-width="1.2"/>
<path d="M559.500 50.500H569.500V60.500H559.500Z" stroke="#222" stroke-width="1.3" fill="none" />
<path d="M555 55.500H565V65.500H555Z" stroke="#999" stroke-width="1" fill="none" />
<rect x="557.8" y="48.8" width="3.400" height="3.400" fill="#fff" stroke="#222" stroke-width="1"/>
<rect x="567.8" y="48.8" width="3.400" height="3.400" fill="#fff" stroke="#222" stroke-width="1"/>
<rect x="557.8" y="58.8" width="3.400" height="3.400" fill="#fff" stroke="#222" stroke-width="1"/>
<rect x="567.8" y="58.8" width="3.400" height="3.400" fill="#fff" stroke="#222" stroke-width="1"/>
<path d="M583 62.500V56L589 51.500H594L599.500 57V62.500Z" stroke="#222" stroke-width="1.5" fill="none" />
<path d="M587 57L593.500 50L600 56.500L593.500 63.500Z" stroke="#3d7be0" stroke-width="1.2" fill="none" />
<path d="M609.5 56H617.5L613.5 60.5Z" fill="#222"/>
<path d="M623.500 45V71" stroke="#8a8a8a" stroke-width="1.2" fill="none" />
<path d="M633 49V66" stroke="#3d7be0" stroke-width="1" fill="none" />
<path d="M634 53L646 61M634 63.500L646 54.500" stroke="#222" stroke-width="1.3" fill="none" />
<circle cx="647.500" cy="53.500" r="2.200" fill="none" stroke="#222" stroke-width="1.200"/><circle cx="647.500" cy="62" r="2.200" fill="none" stroke="#222" stroke-width="1.200"/>
<path d="M658 55Q660 51 664 52L666 50.500L668.500 54L666.500 56.500L674 63.500" stroke="#222" stroke-width="1.7" fill="none" />
<path d="M658 55L660.500 59.500L664.500 58.500L666.500 56.500" stroke="#222" stroke-width="1.5" fill="none" />
<path d="M682 50H700" stroke="#a9c9ee" stroke-width="1.3" fill="none" />
<path d="M691 53V60M688 56L691 53L694 56M686 62V66M689.500 62V66M693 62V66M696.500 62V66" stroke="#bdbdbd" stroke-width="1.1" fill="none" />
<path d="M710 66V52.500H724M721 49.500V55.500M707.500 63H713" stroke="#bdbdbd" stroke-width="1.2" fill="none" />
<path d="M733 66Q733 53 746 52.500M743.500 49.500V55.500M730.500 63H736" stroke="#bdbdbd" stroke-width="1.2" fill="none" />
<path d="M758.500 50.500H773.500V65.500H758.500ZM758.500 57.500H765.500V65.500M762 54V51.500M760.500 53L762 51.500L763.500 53M768 61.500H772M770.500 60L772 61.500L770.500 63" stroke="#bdbdbd" stroke-width="1" fill="none" />
<path d="M783 58.500L791.500 51L800 58.500M785.500 57V65.500H797.500V57" stroke="#bdbdbd" stroke-width="1.3" fill="none" />
<path d="M786.500 49.500H796.500" stroke="#d9d9d9" stroke-width="1" fill="none" />
<path d="M806.500 45V71" stroke="#8a8a8a" stroke-width="1.2" fill="none" />
<path d="M817.500 66V51.500H828.500L825.500 54.500L828.500 58H817.500" stroke="#222" stroke-width="1.4" fill="none" />
<path d="M842 66V51.500H852.500L850 54.500L852.500 57.500H842" stroke="#222" stroke-width="1.4" fill="none" />
<rect x="849" y="57.500" width="8.500" height="9" fill="#3d7be0"/>
<path d="M852 60H856.500M852 62.500H856.500M852 65H856.500" stroke="#fff" stroke-width="1" fill="none" />
<path d="M850 60H851M850 62.500H851M850 65H851" stroke="#fff" stroke-width="1" fill="none" />
<path d="M870.500 63H869Q865.500 62.500 865.500 59Q866 56 869 56Q869.500 51 874.500 51Q879 51 880 55.500Q883.500 55.500 883.500 59" stroke="#222" stroke-width="1.4" fill="none" />
<rect x="871.500" y="58" width="11.500" height="9" rx="1" fill="#3d7be0"/>
<path d="M874 61.500H881M874 64H881" stroke="#fff" stroke-width="1" fill="none" />
<path d="M894.500 50V66" stroke="#8a8a8a" stroke-width="1.2" fill="none" />
<path d="M907 66V54L910 51.500H921V63.500M907 54H918V66M918 54L921 51.500M910.500 57H915M910.500 54V57" stroke="#222" stroke-width="1.5" fill="none" />
<path d="M935 56H943L939 60.5Z" fill="#222"/>
<path d="M953.500 64V54L956.500 51.500H966.500V57M953.500 54H964V58M964 54L966.500 51.500" stroke="#222" stroke-width="1.5" fill="none" />
<rect x="957.500" y="58.500" width="11.500" height="8.500" rx="1" fill="#3d7be0"/>
<path d="M960 62H967M960 64.500H967" stroke="#fff" stroke-width="1" fill="none" />
<path d="M18.500 91Q12.500 90 13 85Q13.500 81.500 17.500 81Q15.500 85.500 18.500 91Z" stroke="#5a8ff0" stroke-width="1.2" fill="#dbe7fb" />
<path d="M20.500 85.500Q20 82.500 22.500 82.500Q23 80 26 80.500Q28.500 81 28.500 83.500Q30 84 29 85.500Z" stroke="#333" stroke-width="1.2" fill="none" />
<path d="M24.500 87.500Q29 89.500 26.500 93.500Q23.500 96 20 94Q24.500 93 24.500 87.500Z" stroke="#9a9a9a" stroke-width="1.3" fill="none" />
<path d="M47.500 90Q42.500 89 43 84.500Q43.500 81 47 80.500Q45 85 47.500 90Z" stroke="#5a8ff0" stroke-width="1.2" fill="#dbe7fb" />
<path d="M49.500 85.500Q49 82.500 51.500 82.500Q52 80 55 80.500Q57.500 81 57.500 83.500Q59 84 58 85.500Z" stroke="#333" stroke-width="1.2" fill="none" />
<path d="M51 88H55.500Q57.500 88.200 57.300 90Q57 91.500 55 91.500H51.500Q49.500 91.800 50 93.500Q50.200 94.500 51.500 94.500H56.500" stroke="#333" stroke-width="1.4" fill="none" />
<circle cx="56.800" cy="88" r="1.200" fill="#333"/><circle cx="50.300" cy="95" r="1.300" fill="#333"/>
<path d="M19.500 150L21 144L29 141" stroke="#222" stroke-width="1.2" fill="none" />
<circle cx="19.500" cy="150" r="1.500" fill="#111"/><circle cx="21" cy="144" r="1.300" fill="#111"/>
<path d="M24 139.500H34V147.500H24Z" stroke="#222" stroke-width="1.1" fill="none" stroke-dasharray="2 1.300"/>
<path d="M42.500 140L47.500 144.500L42.500 149Z" fill="#333"/>
<path d="M61 139.500H72M61 139.500V149.500H74V146" stroke="#222" stroke-width="1.2" fill="none" stroke-dasharray="2 1.300"/>
<path d="M74 138V145L76 143.500L77.500 146.500L78.500 146L77.500 143.500H79.500Z" stroke="#222" stroke-width="0.8" fill="#222" />
<path d="M85 140L90 144.500L85 149Z" fill="#333"/>
<circle cx="115.500" cy="139" r="1.800" fill="#111"/>
<path d="M116 140Q122.500 141.500 121.500 147Q120 151.500 115 150.500Q110.500 149 112 144.500Q113.500 141.500 117 143Q119.500 145 117.500 147.500" stroke="#333" stroke-width="1.5" fill="none" />
<path d="M154 132V145L157 142.500L159.500 148L162 147L159.500 141.500H163.500Z" stroke="#555" stroke-width="1" fill="#8a8a8a" />
</svg>
<div class="abs" style="left:38px;top:184px;width:1px;height:810px;background:#e2e2e2"></div>
<div class="abs" style="left:3px;top:171px;width:35.5px;height:27px;background:#c5def6;border:1px solid #b3d3f3"></div>
<div class="abs" style="left:3px;top:234.5px;width:35.5px;height:19.500px;background:#dcdcdc;border-radius:2px"></div>
<div class="abs" style="left:3px;top:890px;width:35.5px;height:19.500px;background:#dcdcdc;border-radius:2px"></div>
<div class="abs" style="left:3px;top:994.5px;width:35.5px;height:19.500px;background:#dcdcdc;border-radius:2px"></div>
<div class="abs" style="left:4px;top:235px;width:34px;height:19px;overflow:hidden"><div class="t" style="left:0.0px;top:1.8px;height:15.5px;line-height:15.5px;font-size:11.5px;color:#111;transform:scaleX(1.034);-webkit-text-stroke:0.35px #111;">Design</div></div>
<div class="abs" style="left:4px;top:890.500px;width:34px;height:19px;overflow:hidden"><div class="t" style="left:0.0px;top:1.8px;height:15.5px;line-height:15.5px;font-size:11.5px;color:#111;transform:scaleX(1.043);-webkit-text-stroke:0.35px #111;">Viewpoint</div></div>
<div class="abs" style="left:4px;top:995px;width:32.500px;height:19px;overflow:hidden"><div class="t" style="left:0.0px;top:1.8px;height:15.5px;line-height:15.5px;font-size:11.5px;color:#111;transform:scaleX(0.986);-webkit-text-stroke:0.35px #111;">Document</div></div>
<svg width="1920" height="1040" viewBox="0 0 1920 1040">
<path d="M12 165.500H27" stroke="#888" stroke-width="1.2" fill="none" stroke-linejoin="round" />
<path d="M16 176V192L19.500 189L22 194.500L25 193.500L22.500 188H27Z" stroke="#444" stroke-width="1" fill="#7a7a7a" stroke-linejoin="round" />
<path d="M11.500 208.500H29.500V223.500H11.500Z" stroke="#222" stroke-width="1.3" fill="none" stroke-linejoin="round" stroke-dasharray="3 2"/>
<path d="M11.300 264.500L29.500 263V273.500L11.500 280.300Z" stroke="#222" stroke-width="1.2" fill="#f9f9f9" stroke-linejoin="round" />
<path d="M16.500 293.500V310.500Q20 313.500 23.300 310.500V293.500M16.500 293.500Q20 291 23.300 293.500Q20 296 16.500 293.500" stroke="#222" stroke-width="1.2" fill="#f9f9f9" stroke-linejoin="round" />
<path d="M10.500 325L29.500 331.500V337.500L10.500 329.500ZM8.800 324.300L10.500 325" stroke="#222" stroke-width="1.2" fill="#f9f9f9" stroke-linejoin="round" />
<path d="M6.500 361.500L11.500 357L13.500 358.500L13 356L20.500 353.500L32.500 360L16 367.500Z" stroke="#222" stroke-width="1.2" fill="#f9f9f9" stroke-linejoin="round" />
<path d="M6.500 391.500L12.500 383H27L18.500 399ZM27 383L33 392.500L24.500 390" stroke="#222" stroke-width="1.2" fill="#f9f9f9" stroke-linejoin="round" />
<path d="M7.500 417.500Q18 422 32 412.500L29.500 427.500L22 422.500L15.500 430.500ZM22 422.500L32 412.500" stroke="#222" stroke-width="1.2" fill="#f9f9f9" stroke-linejoin="round" />
<path d="M8.500 444.500L17 442.500L19.500 444.500L11 446.500ZM11 446.500L12.500 449L21 447L19.500 444.500M12.500 449L15 451.500L24 449.500L21 447M15 451.500L16.500 454.500L26.500 452L24 449.500M16.500 454.500L18.500 458L32 455L26.500 452" stroke="#222" stroke-width="1" fill="none" stroke-linejoin="round" />
<path d="M10 488.500V478L30.500 472.500V482M10 482.500L30.500 477M20 475.500V485.500" stroke="#222" stroke-width="1.2" fill="none" stroke-linejoin="round" />
<path d="M10.500 504L30.500 501.500V517.500L10.500 520.500ZM10.500 512L30.500 509.500M17 503V519.500M24 502.500V518.500" stroke="#222" stroke-width="1.2" fill="none" stroke-linejoin="round" />
<path d="M15.500 533.500L25.500 531.500V547.500L15.500 551.500ZM18 541.500H20" stroke="#222" stroke-width="1.2" fill="none" stroke-linejoin="round" />
<path d="M12 565.500L27.500 563.500V576L12 578.500ZM12 572L27.500 570M19.500 564.500V577.500" stroke="#222" stroke-width="1.2" fill="none" stroke-linejoin="round" />
<path d="M8.500 598.500L22 592.500L31 600.500L17.500 606.500ZM12 603.500L25.500 597.500L31.500 605.500L19 611.500Z" stroke="#222" stroke-width="1" fill="none" stroke-linejoin="round" />
<path d="M12 624.500L27.500 622.500V635L12 637.500ZM12 634L22 632.500V623.500M22 632.500L27.500 635" stroke="#222" stroke-width="1.2" fill="none" stroke-linejoin="round" />
<path d="M10.500 652.500H24V659.700H30.500V669H25.500L24.500 667.500H14.500L13.500 669H10.500ZM15.500 652.500V658.500Q20 658 20.500 652.500M17 662H23.500M17 664.200H23.500" stroke="#222" stroke-width="1.3" fill="none" stroke-linejoin="round" />
<path d="M4.500 684.500Q14 679 23 684Q27 690 33.500 694.500Q26 699.500 20.500 697.500Q15 689 4.500 684.500M11 682Q19 686 27.500 697.500M17.500 681.500Q23 688 31 696.500M10 687Q18 684 25.500 687M15.500 692Q22 689 30 691.500" stroke="#222" stroke-width="1" fill="none" stroke-linejoin="round" />
<path d="M12 724.500Q11 714 24 711L29 722.500L19 730.500ZM24 711Q21 719 29 722.500" stroke="#222" stroke-width="1.2" fill="none" stroke-linejoin="round" />
<path d="M13 742.500V761M13 742.500Q16 740.500 18.500 742.500V752.500M13 752.500H18.500L28.500 755.500V765M18.500 752.500V758M13 756L23 759.500V766.500M23 759.500L28.500 755.500" stroke="#222" stroke-width="1.2" fill="none" stroke-linejoin="round" />
<path d="M14.500 776.500Q14.500 771.500 19.500 771.500Q24.500 771.500 24.500 776.500Q24.500 779.500 22 781.500V785H17V781.500Q14.500 779.500 14.500 776.500M17.500 787.500H21.500M18 777L19.500 775.500L20.500 777.500L22 776M11 776.500H8.500M28 776.500H30.500M12.500 770.500L10.500 769M26.500 770.500L28.500 769M12.500 782.500L10.500 784M26.500 782.500L28.500 784" stroke="#222" stroke-width="1" fill="none" stroke-linejoin="round" />
<path d="M12.500 806L19 801L26 805V816.500L19 820L12.500 816.500ZM12.500 806L19 809.500L26 805M19 809.500V820M15 818V820.500M23 818V820.500" stroke="#222" stroke-width="1.2" fill="none" stroke-linejoin="round" />
<path d="M9.500 832.500L19 834.500L31.500 831.500V844.500L19 847.500L9.500 845.500ZM19 834.500V847.500M9.500 839L19 841L31.500 838M14 833.500V846.500M25 833V846" stroke="#222" stroke-width="1.2" fill="none" stroke-linejoin="round" />
<path d="M10 862.500L18.500 861V877L10 879.500ZM18.500 861L29 862.500V873.500L18.500 877" stroke="#222" stroke-width="1.2" fill="none" stroke-linejoin="round" />
<path d="M6 928.500H18M21.500 933H32" stroke="#222" stroke-width="1.2" fill="none" stroke-linejoin="round" />
<path d="M7 927.500L9.500 923.500L12 927.500ZM25.500 932.500L28 928.500L30.500 932.500Z" fill="#222"/>
<path d="M19 930.500H20" stroke="#222" stroke-width="1" fill="none" stroke-linejoin="round" />
<path d="M6 960.500H32" stroke="#222" stroke-width="1.2" fill="none" stroke-linejoin="round" />
<path d="M16 958L19.500 953L23 958Z" fill="#222"/>
<circle cx="19.500" cy="986.500" r="3" fill="none" stroke="#222" stroke-width="1.2"/><path d="M11 986.500L13.500 984.500V988.500ZM28 986.500L25.500 984.500V988.500ZM19.500 978L17.500 980.500H21.500Z" fill="#222"/>
</svg>
<div class="abs" style="left:1655.5px;top:203.500px;width:264.500px;height:704.500px;background:#fff"></div>
<div class="abs" style="left:1655px;top:184px;width:1px;height:810px;background:#dadada"></div>
<div class="abs" style="left:1656px;top:247.500px;width:264px;height:21px;background:#dcdcdc"></div>
<div class="abs" style="left:1658px;top:173px;width:43px;height:27.500px;background:#e4e4e4;border:1px solid #c4c4c4"></div>
<div class="abs" style="left:1800px;top:171px;width:30px;height:30px;background:#c3ddf6;border:1px solid #b3d3f3"></div>
<div class="abs" style="left:1657px;top:942.500px;width:261px;height:21px;background:#dcdcdc;border-radius:2px"></div>
<div class="abs" style="left:1737.500px;top:967.500px;width:180px;height:19.500px;background:#fff;border:1px solid #444;box-shadow:inset 0 0 0 1px #e6e6e6"></div>
<div class="abs" style="left:1658px;top:990px;width:259.500px;height:21px;background:#dddddd;border:1px solid #bcbcbc"></div>
<div class="t" style="left:1699.5px;top:207.2px;height:15.5px;line-height:15.5px;font-size:11.5px;color:#1a1a1a;transform:scaleX(0.930);">Rooms</div>
<div class="t" style="left:1709.5px;top:229.2px;height:15.5px;line-height:15.5px;font-size:11.5px;color:#1a1a1a;transform:scaleX(0.930);">Stories</div>
<div class="t" style="left:1719.3px;top:251.2px;height:15.5px;line-height:15.5px;font-size:11.5px;color:#1a1a1a;font-weight:bold;transform:scaleX(0.945);">0. Ground Floor</div>
<div class="t" style="left:1709.5px;top:273.2px;height:15.5px;line-height:15.5px;font-size:11.5px;color:#1a1a1a;transform:scaleX(0.952);">Sections</div>
<div class="t" style="left:1709.5px;top:295.2px;height:15.5px;line-height:15.5px;font-size:11.5px;color:#1a1a1a;transform:scaleX(0.961);">Elevations</div>
<div class="t" style="left:1709.5px;top:317.2px;height:15.5px;line-height:15.5px;font-size:11.5px;color:#1a1a1a;">Interior Elevations</div>
<div class="t" style="left:1709.5px;top:339.2px;height:15.5px;line-height:15.5px;font-size:11.5px;color:#1a1a1a;transform:scaleX(0.992);">Worksheets</div>
<div class="t" style="left:1709.5px;top:361.2px;height:15.5px;line-height:15.5px;font-size:11.5px;color:#1a1a1a;transform:scaleX(0.976);">Details</div>
<div class="t" style="left:1709.5px;top:383.2px;height:15.5px;line-height:15.5px;font-size:11.5px;color:#1a1a1a;transform:scaleX(0.977);">3D Documents</div>
<div class="t" style="left:1709.5px;top:405.2px;height:15.5px;line-height:15.5px;font-size:11.5px;color:#1a1a1a;transform:scaleX(0.918);">3D</div>
<div class="t" style="left:1719.3px;top:427.2px;height:15.5px;line-height:15.5px;font-size:11.5px;color:#1a1a1a;transform:scaleX(0.954);">Generic Perspective</div>
<div class="t" style="left:1719.3px;top:449.2px;height:15.5px;line-height:15.5px;font-size:11.5px;color:#1a1a1a;transform:scaleX(0.987);">Generic Axonometry</div>
<div class="t" style="left:1709.5px;top:471.2px;height:15.5px;line-height:15.5px;font-size:11.5px;color:#1a1a1a;transform:scaleX(0.950);">Schedules</div>
<div class="t" style="left:1709.5px;top:493.2px;height:15.5px;line-height:15.5px;font-size:11.5px;color:#1a1a1a;transform:scaleX(0.963);">Project Indexes</div>
<div class="t" style="left:1709.5px;top:515.2px;height:15.5px;line-height:15.5px;font-size:11.5px;color:#1a1a1a;transform:scaleX(0.888);">Lists</div>
<div class="t" style="left:1709.5px;top:537.2px;height:15.5px;line-height:15.5px;font-size:11.5px;color:#1a1a1a;transform:scaleX(1.043);">Info</div>
<div class="t" style="left:1709.5px;top:559.2px;height:15.5px;line-height:15.5px;font-size:11.5px;color:#1a1a1a;transform:scaleX(0.971);">API Root Group</div>
<div class="t" style="left:1709.5px;top:581.2px;height:15.5px;line-height:15.5px;font-size:11.5px;color:#1a1a1a;transform:scaleX(0.932);">Area List</div>
<div class="t" style="left:1699.5px;top:603.2px;height:15.5px;line-height:15.5px;font-size:11.5px;color:#1a1a1a;transform:scaleX(0.994);">Help</div>
<div class="t" style="left:1681.0px;top:945.8px;height:15.5px;line-height:15.5px;font-size:11.5px;color:#1a1a1a;transform:scaleX(0.992);">Properties</div>
<div class="t" style="left:1677.0px;top:970.6px;height:15.5px;line-height:15.5px;font-size:11.5px;color:#1a1a1a;transform:scaleX(0.938);">0.</div>
<div class="t" style="left:1742.7px;top:970.6px;height:15.5px;line-height:15.5px;font-size:11.5px;color:#1a1a1a;transform:scaleX(1.018);">Ground Floor</div>
<div class="t" style="left:1762.5px;top:993.9px;height:15.5px;line-height:15.5px;font-size:11.5px;color:#111;">Settings...</div>
<div class="t" style="left:1783.0px;top:1017.0px;height:17px;line-height:17px;font-size:13px;color:#b3b3b3;transform:scaleX(0.976);">GRAPHISOFT ID</div>
<svg width="1920" height="1040" viewBox="0 0 1920 1040">
<path d="M1752 166.800H1823" stroke="#8a8a8a" stroke-width="1.3" fill="none" stroke-linejoin="round" />
<path d="M1670.500 188V181L1674 178.500L1678 181V187H1670.500M1674 178.500V188M1675 188V194H1680M1675 190.500H1680" stroke="#222" stroke-width="1.1" fill="none" stroke-linejoin="round" />
<path d="M1680 190.500H1683M1680 194H1683" stroke="#222" stroke-width="2" fill="none" stroke-linejoin="round" />
<path d="M1692.500 182L1696.500 186L1692.500 190Z" fill="#333"/>
<path d="M1806.5 192.5V184.5L1811.5 179.5L1823.5 186.5V192.5ZM1811.5 179.5L1815.5 185.5V192.5M1815.5 185.5L1823.5 186.5" stroke="#222" stroke-width="1.4" fill="none" stroke-linejoin="round" />
<path d="M1836.5 180H1843.5V185.5H1853.5V193.5H1836.5ZM1839.5 180V182.5H1841.5V180" stroke="#222" stroke-width="1.3" fill="none" stroke-linejoin="round" />
<path d="M1866.500 194V183L1870.500 179V190ZM1870.500 179H1884V194H1866.500M1870.500 190L1866.500 194" stroke="#222" stroke-width="1.2" fill="none" stroke-linejoin="round" />
<rect x="1878" y="190" width="6" height="4" fill="#888"/>
<path d="M1899.500 179H1908.500V190.500H1899.500ZM1897.500 181.500H1906.500M1908.500 181H1910.500V192.500H1901.500V190.500M1910.500 183H1912.500V194.500H1903.500V192.500" stroke="#222" stroke-width="1.2" fill="none" stroke-linejoin="round" />
<path d="M1662.5 212.5L1666.5 216.5L1670.5 212.5" stroke="#333" stroke-width="1.6" fill="none" stroke-linejoin="round" />
<path d="M1672.5 234.5L1676.5 238.5L1680.5 234.5" stroke="#333" stroke-width="1.6" fill="none" stroke-linejoin="round" />
<path d="M1672.5 410.5L1676.5 414.5L1680.5 410.5" stroke="#333" stroke-width="1.6" fill="none" stroke-linejoin="round" />
<path d="M1675 474.5L1679 478.5L1675 482.5" stroke="#9a9a9a" stroke-width="1.5" fill="none" stroke-linejoin="round" />
<path d="M1675 496.5L1679 500.5L1675 504.5" stroke="#9a9a9a" stroke-width="1.5" fill="none" stroke-linejoin="round" />
<path d="M1675 518.5L1679 522.5L1675 526.5" stroke="#9a9a9a" stroke-width="1.5" fill="none" stroke-linejoin="round" />
<path d="M1675 540.5L1679 544.5L1675 548.5" stroke="#9a9a9a" stroke-width="1.5" fill="none" stroke-linejoin="round" />
<path d="M1665 606.5L1669 610.5L1665 614.5" stroke="#9a9a9a" stroke-width="1.5" fill="none" stroke-linejoin="round" />
<path d="M1676.5 220.5V212.5L1681.5 207.5L1693.5 214.5V220.5ZM1681.5 207.5L1685.5 213.5V220.5M1685.5 213.5L1693.5 214.5" stroke="#222" stroke-width="1.3" fill="none" stroke-linejoin="round" />
<path d="M1686.5 229.5H1693.5V235.0H1703.5V243.0H1686.5ZM1689.5 229.5V232.0H1691.5V229.5" stroke="#222" stroke-width="1.2" fill="#fff" stroke-linejoin="round" />
<path d="M1696.5 251.5H1703.5V257.0H1713.5V265.0H1696.5ZM1699.5 251.5V254.0H1701.5V251.5" stroke="#222" stroke-width="1.2" fill="#fff" stroke-linejoin="round" />
<path d="M1687 286.5V278.5L1695.500 274.5L1704 278.5V286.5ZM1687 278.5H1704" stroke="#222" stroke-width="1.2" fill="#f4f4f4" stroke-linejoin="round" />
<path d="M1687 308.5V300.5L1695.500 296.5L1704 300.5V308.5Z" stroke="#222" stroke-width="1.2" fill="#f4f4f4" stroke-linejoin="round" />
<path d="M1686.500 318.0H1704V331.0H1686.500ZM1690 330.5V321.5H1694V330.5M1697 321.0H1701V325.0H1697Z" stroke="#222" stroke-width="1.2" fill="none" stroke-linejoin="round" />
<path d="M1686.500 341.0H1700L1704 345.0V353.0H1686.500ZM1690 350.0L1697 344.0L1699 346.0L1692 350.5ZM1690 351.5H1701" stroke="#222" stroke-width="1.1" fill="none" stroke-linejoin="round" />
<circle cx="1695.500" cy="368.5" r="7.300" fill="none" stroke="#222" stroke-width="1.2"/>
<path d="M1693 361.5V375.5M1693 365.5H1703V371.5H1693M1696 365.5V371.5" stroke="#222" stroke-width="1.1" fill="none" stroke-linejoin="round" />
<path d="M1686.500 384.5H1701L1704 387.5V397.0H1686.500ZM1689.500 389.0H1696.500V394.5H1689.500ZM1691.500 389.0V387.0H1699V392.5H1696.500" stroke="#222" stroke-width="1.1" fill="none" stroke-linejoin="round" />
<path d="M1687.5 407.0L1698.5 405.0V420.5L1687.5 418.0ZM1698.5 405.0Q1702.0 412.5 1698.5 420.5" stroke="#222" stroke-width="1.2" fill="#f6f6f6" stroke-linejoin="round" />
<path d="M1697.5 429.0L1708.5 427.0V442.5L1697.5 440.0ZM1708.5 427.0Q1712.0 434.5 1708.5 442.5" stroke="#222" stroke-width="1.2" fill="#f6f6f6" stroke-linejoin="round" />
<path d="M1697.500 453.5L1701.500 449.0H1713V459.5L1709 464.0H1697.500ZM1697.500 453.5H1709V464.0M1709 453.5L1713 449.0" stroke="#222" stroke-width="1.1" fill="#fafafa" stroke-linejoin="round" />
<path d="M1689.500 471.0H1702V486.0H1689.500ZM1689.500 476.0H1702M1689.500 481.0H1702M1693.700 471.0V486.0M1697.900 471.0V486.0" stroke="#222" stroke-width="1.1" fill="none" stroke-linejoin="round" />
<path d="M1686.500 494.0H1704V507.0H1686.500ZM1693 498.0H1701.500M1693 501.0H1701.500M1693 504.0H1701.500M1689 501.0H1691M1689 504.0H1691" stroke="#222" stroke-width="1.1" fill="none" stroke-linejoin="round" />
<path d="M1688.500 495.5H1692L1690.300 499.0Z" fill="#222"/>
<path d="M1688.500 515.0H1702V530.0H1688.500ZM1691 519.0H1699.500M1691 522.0H1699.500M1691 525.0H1699.500M1691 527.5H1699.500" stroke="#222" stroke-width="1.1" fill="none" stroke-linejoin="round" />
<path d="M1686.5 538.0H1704.0V551.0H1686.5ZM1691.5 541.0H1699.0V548.0H1691.5ZM1693.5 543.0H1697.0M1693.5 545.0H1697.0M1693.5 546.5H1697.0" stroke="#222" stroke-width="1.1" fill="#f2f2f2" stroke-linejoin="round" />
<path d="M1676.5 604.0H1694.0V617.0H1676.5ZM1681.5 607.0H1689.0V614.0H1681.5ZM1683.5 609.0H1687.0M1683.5 611.0H1687.0M1683.5 612.5H1687.0" stroke="#222" stroke-width="1.1" fill="#f2f2f2" stroke-linejoin="round" />
<rect x="1686.500" y="562.5" width="17.500" height="7.500" fill="#777" stroke="#333" stroke-width="1"/>
<path d="M1689 570.0L1693 562.5M1693 570.0L1697 562.5M1697 570.0L1701 562.5M1701 570.0L1704 564.5" stroke="#e8e8e8" stroke-width="1.1" fill="none" stroke-linejoin="round" />
<path d="M1690.500 580.5H1698.500L1702.500 584.5V596.5H1690.500ZM1698.500 580.5V584.5H1702.500M1693 587.0H1700.500V594.0H1693ZM1693 589.5H1700.500M1693 591.8H1700.500M1696.700 587.0V594.0" stroke="#222" stroke-width="1.1" fill="#f4f4f4" stroke-linejoin="round" />
<path d="M1838 918.500H1854V930H1838Z" stroke="#222" stroke-width="1.3" fill="none" stroke-linejoin="round" />
<rect x="1846" y="925" width="9.500" height="7.500" rx="1" fill="#3d7be0"/>
<path d="M1848 928H1853.500M1848 930.500H1853.500" stroke="#fff" stroke-width="1" fill="none" stroke-linejoin="round" />
<path d="M1867 931V921H1873V924H1883V931Z" stroke="#222" stroke-width="1.3" fill="none" stroke-linejoin="round" />
<circle cx="1879.500" cy="920.500" r="4.800" fill="#f0efef" stroke="#3d7be0" stroke-width="1.2"/>
<path d="M1877 920.500H1882M1879.500 918V923" stroke="#3d7be0" stroke-width="1.1" fill="none" stroke-linejoin="round" />
<path d="M1899.500 919.500L1910.500 931M1910.500 919.500L1899.500 931" stroke="#f2a36e" stroke-width="1.5" fill="none" stroke-linejoin="round" />
<path d="M1663 950.500H1671L1667 955Z" fill="#333"/>
<path d="M1661.500 983V972.500H1666V974.500H1673V983Z" stroke="#222" stroke-width="1.1" fill="none" stroke-linejoin="round" />
<path d="M1747 1019.500H1759.500V1029H1747Z" stroke="#222" stroke-width="1.2" fill="none" stroke-linejoin="round" />
<path d="M1750.500 1023H1763V1032.500H1750.500Z" stroke="#222" stroke-width="1.4" fill="#f0efef" stroke-linejoin="round" />
<path d="M1767.500 1017V1036M1896.500 1017V1036" stroke="#d0d0d0" stroke-width="1" fill="none" stroke-linejoin="round" />
</svg>
<div class="t" style="left:184.0px;top:996.5px;height:15.5px;line-height:15.5px;font-size:11.5px;color:#1a1a1a;transform:scaleX(0.908);">137%</div>
<div class="t" style="left:346.7px;top:996.5px;height:15.5px;line-height:15.5px;font-size:11.5px;color:#1a1a1a;transform:scaleX(0.910);">0°</div>
<div class="t" style="left:494.0px;top:996.5px;height:15.5px;line-height:15.5px;font-size:11.5px;color:#1a1a1a;transform:scaleX(0.904);">1:100</div>
<div class="t" style="left:632.3px;top:996.5px;height:15.5px;line-height:15.5px;font-size:11.5px;color:#1a1a1a;transform:scaleX(1.013);">02 Drafting</div>
<div class="t" style="left:783.3px;top:996.5px;height:15.5px;line-height:15.5px;font-size:11.5px;color:#1a1a1a;transform:scaleX(1.007);">Entire Model</div>
<div class="t" style="left:921.0px;top:996.5px;height:15.5px;line-height:15.5px;font-size:11.5px;color:#1a1a1a;transform:scaleX(0.991);">03 Architectural 100</div>
<div class="t" style="left:1081.7px;top:996.5px;height:15.5px;line-height:15.5px;font-size:11.5px;color:#1a1a1a;transform:scaleX(0.994);">03 Building Plans</div>
<div class="t" style="left:1246.7px;top:996.5px;height:15.5px;line-height:15.5px;font-size:11.5px;color:#1a1a1a;transform:scaleX(0.979);">No Overrides</div>
<div class="t" style="left:1379.6px;top:996.5px;height:15.5px;line-height:15.5px;font-size:11.5px;color:#1a1a1a;transform:scaleX(0.971);">00 Show All Elements</div>
<div class="t" style="left:1559.6px;top:996.5px;height:15.5px;line-height:15.5px;font-size:11.5px;color:#1a1a1a;transform:scaleX(0.982);">Plain Meter</div>
<div class="t" style="left:4.0px;top:1018.8px;height:15.5px;line-height:15.5px;font-size:11.5px;color:#1a1a1a;transform:scaleX(1.020);">Click an Element or Draw a Selection Area. Press and Hold Ctrl+Shift to Toggle Element/Sub-Element Selection.</div>
<div class="abs" style="left:39px;top:162px;width:26px;height:22px;background:#dcdcdc"></div>
<div class="abs" style="left:65px;top:162px;width:240px;height:22px;background:#fff"></div>
<div class="abs" style="left:1605px;top:162px;width:50px;height:22px;background:#f0efef"></div>
<div class="t" style="left:90.5px;top:166.2px;height:15.5px;line-height:15.5px;font-size:11.5px;color:#333;">[0. Ground Floor]</div>
<svg width="1920" height="1040" viewBox="0 0 1920 1040">
<path d="M254 1000.5L258.5 1004.5L254 1008.5Z" fill="#222"/>
<path d="M408.7 1000.5L413.2 1004.5L408.7 1008.5Z" fill="#222"/>
<path d="M563.7 1000.5L568.2 1004.5L563.7 1008.5Z" fill="#222"/>
<path d="M719 1000.5L723.5 1004.5L719 1008.5Z" fill="#222"/>
<path d="M873 1000.5L877.5 1004.5L873 1008.5Z" fill="#222"/>
<path d="M1028.7 1000.5L1033.2 1004.5L1028.7 1008.5Z" fill="#222"/>
<path d="M1183 1000.5L1187.5 1004.5L1183 1008.5Z" fill="#222"/>
<path d="M1336.8 1000.5L1341.3 1004.5L1336.8 1008.5Z" fill="#222"/>
<path d="M1491 1000.5L1495.5 1004.5L1491 1008.5Z" fill="#222"/>
<path d="M1645 1000.5L1649.5 1004.5L1645 1008.5Z" fill="#222"/>
<path d="M111 995.500V1013.500" stroke="#a8a8a8" stroke-width="1.2" fill="none" stroke-linejoin="round" />
<path d="M266 995.500V1013.500" stroke="#a8a8a8" stroke-width="1.2" fill="none" stroke-linejoin="round" />
<path d="M420.7 995.500V1013.500" stroke="#a8a8a8" stroke-width="1.2" fill="none" stroke-linejoin="round" />
<path d="M575.7 995.500V1013.500" stroke="#a8a8a8" stroke-width="1.2" fill="none" stroke-linejoin="round" />
<path d="M730.7 995.500V1013.500" stroke="#a8a8a8" stroke-width="1.2" fill="none" stroke-linejoin="round" />
<path d="M885.7 995.500V1013.500" stroke="#a8a8a8" stroke-width="1.2" fill="none" stroke-linejoin="round" />
<path d="M1040 995.500V1013.500" stroke="#a8a8a8" stroke-width="1.2" fill="none" stroke-linejoin="round" />
<path d="M1195.4 995.500V1013.500" stroke="#a8a8a8" stroke-width="1.2" fill="none" stroke-linejoin="round" />
<path d="M1348.8 995.500V1013.500" stroke="#a8a8a8" stroke-width="1.2" fill="none" stroke-linejoin="round" />
<path d="M1502 995.500V1013.500" stroke="#a8a8a8" stroke-width="1.2" fill="none" stroke-linejoin="round" />
<circle cx="51" cy="1003.300" r="6.200" fill="none" stroke="#333" stroke-width="1.200" stroke-dasharray="33 6" stroke-dashoffset="-22"/>
<path d="M46.500 1008L43.500 1011M43.500 1003H50.500M45.500 1001L43.500 1003L45.500 1005" stroke="#333" stroke-width="1.2" fill="none" stroke-linejoin="round" />
<circle cx="71.500" cy="1003.300" r="6.200" fill="none" stroke="#c4c4c4" stroke-width="1.200" stroke-dasharray="33 6" stroke-dashoffset="-3"/>
<path d="M76 1008L79.500 1011M73 1003H81M79 1001L81 1003L79 1005" stroke="#c4c4c4" stroke-width="1.2" fill="none" stroke-linejoin="round" />
<circle cx="96" cy="1003.300" r="6.200" fill="none" stroke="#333" stroke-width="1.300"/>
<path d="M100.500 1008L104.500 1011.500M93 1003.300H99M96 1000.300V1006.300" stroke="#333" stroke-width="1.3" fill="none" stroke-linejoin="round" />
<circle cx="124" cy="1003.300" r="6.200" fill="none" stroke="#333" stroke-width="1.300"/>
<path d="M128.500 1008L132.500 1011.500" stroke="#333" stroke-width="1.3" fill="none" stroke-linejoin="round" />
<path d="M124 999L122.500 1001H125.500ZM124 1007.600L122.500 1005.600H125.500ZM119.700 1003.300L121.700 1001.800V1004.800ZM128.300 1003.300L126.300 1001.800V1004.800Z" fill="#333"/>
<path d="M274 1004L280 999.500L285 1003L279 1007.500Z M283.500 1006.500Q285.500 1008.500 283 1010.500M283 1010.500L283.300 1008M283 1010.500L285.500 1010.200" stroke="#333" stroke-width="1.1" fill="none" stroke-linejoin="round" />
<path d="M428 1001H442.500V1007.500H428ZM431.500 1007.500V1005M435 1007.500V1005M438.500 1007.500V1005" stroke="#333" stroke-width="1.2" fill="none" stroke-linejoin="round" />
<path d="M583 1001.500L586 998.500H597L594 1001.500ZM583 1005L586 1002M594 1001.500V1008.500H583V1001.500M597 998.500V1005.500L594 1008.500M583 1005H594L597 1002" stroke="#333" stroke-width="1.1" fill="none" stroke-linejoin="round" />
<path d="M738.500 998.500H751V1010H738.500Z" stroke="#333" stroke-width="1.2" fill="none" stroke-linejoin="round" />
<path d="M741 1002.500H743.500M746 1002.500H748.500M741 1007L743.500 1004.500H741.500M746 1007L748.500 1004.500H746.500" stroke="#333" stroke-width="1" fill="none" stroke-linejoin="round" />
<path d="M896 998V1006Q899 1010 902 1006V998M899 1008V1012" stroke="#333" stroke-width="1.2" fill="none" stroke-linejoin="round" />
<path d="M1048 999H1062V1009.500H1048ZM1051 1002H1059V1006.500H1051Z" stroke="#333" stroke-width="1.1" fill="none" stroke-linejoin="round" />
<path d="M1203 1000.500H1208.500V1007H1203ZM1208.500 1003H1211M1210 999V1001H1216V999ZM1211 1003H1215.500V1010H1210.500V1003" stroke="#333" stroke-width="1.2" fill="none" stroke-linejoin="round" />
<path d="M1212.500 1005V1008.500" stroke="#333" stroke-width="1" fill="none" stroke-linejoin="round" />
<path d="M1357 1010L1362 1000L1366 1003.500M1362 1000V997M1360 1010H1370V1005L1366 1003.500V1010" stroke="#777" stroke-width="1.1" fill="none" stroke-linejoin="round" />
<path d="M1366 1003.500L1370 1005" stroke="#333" stroke-width="1.2" fill="none" stroke-linejoin="round" />
<path d="M1509.500 1002.500H1524.500V1010.500H1509.500ZM1509.500 999.500H1524.500" stroke="#333" stroke-width="1.3" fill="none" stroke-linejoin="round" />
<path d="M44 167.500H50V171.500H44ZM53 167.500H59.500V171.500H53ZM44 174.500H50V178.500H44ZM53 174.500H59.500V178.500H53Z" stroke="#333" stroke-width="1.1" fill="none" stroke-linejoin="round" />
<path d="M70.500 165.500H76.500V170.500H87V179.500H70.500ZM73 165.500V168H74.800V165.500" stroke="#222" stroke-width="1.2" fill="#fff" stroke-linejoin="round" />
<path d="M1613 168V181M1613 170.500H1617M1613 174.500H1617M1613 178.500H1617M1618 181V172.500L1624 167L1633.500 174V181ZM1624 167L1627 174V181M1627 174L1633.500 174" stroke="#3d7be0" stroke-width="1.1" fill="none" stroke-linejoin="round" />
<path d="M1642.500 172.500H1650L1646.200 176.500Z" fill="#333"/>
<rect x="831" y="187.500" width="31" height="12" fill="#f3f3f3"/><rect x="831" y="980.500" width="31" height="12" fill="#f3f3f3"/><rect x="42" y="573" width="12" height="32" fill="#f3f3f3"/><rect x="1639.500" y="573" width="12" height="32" fill="#f3f3f3"/>
<path d="M834 193.500H860M834 986.500H860" stroke="#f2b07a" stroke-width="1.3" fill="none" stroke-linejoin="round" stroke-dasharray="5 2"/>
<path d="M48 576V603M1645.500 576V603" stroke="#f2b07a" stroke-width="1.3" fill="none" stroke-linejoin="round" stroke-dasharray="5 2"/>
</svg>
<div class="abs" id="palette" style="left:174px;top:86px;width:616px;height:380px;background:#fff;box-shadow:0 -1px 0 0 rgba(60,60,60,.75),0 0 0 1px rgba(90,90,90,.45),0 3px 13px 3px rgba(0,0,0,.30)">
<div class="abs" style="left:0px;top:30px;width:616px;height:35px;background:#f0efef;"></div>
<div class="abs" style="left:0px;top:87px;width:616px;height:21.5px;background:#dcdcdc;"></div>
<div class="abs" style="left:0px;top:164px;width:616px;height:32px;background:#f0efef;"></div>
<div class="abs" style="left:0px;top:196px;width:616px;height:21.5px;background:#d9d9d9;"></div>
<div class="abs" style="left:599px;top:217px;width:17px;height:147px;background:#f0f0f0;"></div>
<div class="abs" style="left:0px;top:364px;width:616px;height:16px;background:#f0f0f0;"></div>
<div class="abs" style="left:600px;top:326px;width:15px;height:19px;background:#cdcdcd;"></div>
<div class="abs" style="left:585px;top:34px;width:28px;height:27px;background:#e3e3e3;border:1px solid #bdbdbd"></div>
<div class="abs" style="left:525px;top:169px;width:88px;height:16px;background:#e1e1e1;border:1px solid #adadad"></div>
</div>
<div class="t" style="left:182.5px;top:93.5px;height:16px;line-height:16px;font-size:12px;color:#222;transform:scaleX(0.987);">Python Palette</div>
<div class="t" style="left:184.0px;top:125.5px;height:16px;line-height:16px;font-size:12px;color:#111;font-weight:bold;transform:scaleX(0.848);">Scripts</div>
<div class="t" style="left:218.5px;top:153.8px;height:15.5px;line-height:15.5px;font-size:11.5px;color:#222;transform:scaleX(0.990);">Excel file importer</div>
<div class="t" style="left:229.0px;top:176.2px;height:15.5px;line-height:15.5px;font-size:11.5px;color:#222;transform:scaleX(0.981);">excel_import.py</div>
<div class="t" style="left:199.0px;top:284.8px;height:15.5px;line-height:15.5px;font-size:11.5px;color:#222;transform:scaleX(0.984);">Console</div>
<div class="t" style="left:732.5px;top:255.5px;height:16px;line-height:16px;font-size:12px;color:#111;transform:scaleX(0.909);">Run</div>
<pre class="abs" style="left:184px;top:304px;font-family:'Liberation Mono',monospace;font-size:11.6px;line-height:15px;color:#2a2a2a;letter-spacing:0.023px">c4ee8660-7b71-4724-9394-b5bb794db90e c4b62357-1289-4d43-a3f6-ab02b192864c 6.0
c4ee8660-7b71-4724-9394-b5bb794db90e a7b55e43-7c56-4c9e-836d-7a56f1d9d760 0.6
9d6f6534-3d2a-4418-be7d-be238cf1ae34 7e221f33-829b-4fbc-a670-e74dabce6289 SW - 009
9d6f6534-3d2a-4418-be7d-be238cf1ae34 3799b10a-61c5-4566-bf9c-eaa9ce49196e 0.6
9d6f6534-3d2a-4418-be7d-be238cf1ae34 c4b62357-1289-4d43-a3f6-ab02b192864c 6.0
9d6f6534-3d2a-4418-be7d-be238cf1ae34 a7b55e43-7c56-4c9e-836d-7a56f1d9d760 0.6

=== Process completed ===</pre>
<svg width="1920" height="1040" viewBox="0 0 1920 1040" style="pointer-events:none">
<path d="M770 96L780 106M780 96L770 106" stroke="#222" stroke-width="1.3" fill="none"/>
<circle cx="742.5" cy="133.5" r="8.3" fill="none" stroke="#222" stroke-width="1.2"/><path d="M742.5 131.5V138.5" stroke="#222" stroke-width="1.8"/><circle cx="742.5" cy="128.6" r="1.1" fill="#222"/>
<path d="M780.4 132.7 L780.4 134.3 L778.2 135.1 L777.7 136.2 L778.7 138.3 L777.6 139.4 L775.5 138.4 L774.4 138.9 L773.6 141.1 L772.0 141.1 L771.2 138.9 L770.1 138.4 L768.0 139.4 L766.9 138.3 L767.9 136.2 L767.4 135.1 L765.2 134.3 L765.2 132.7 L767.4 131.9 L767.9 130.8 L766.9 128.7 L768.0 127.6 L770.1 128.6 L771.2 128.1 L772.0 125.9 L773.6 125.9 L774.4 128.1 L775.5 128.6 L777.6 127.6 L778.7 128.7 L777.7 130.8 L778.2 131.9Z" fill="none" stroke="#333" stroke-width="1.1" stroke-linejoin="round"/><circle cx="772.8" cy="133.5" r="2.6" fill="none" stroke="#333" stroke-width="1.1"/>
<path d="M182.5 159.5L186.5 163.5L190.5 159.5" fill="none" stroke="#333" stroke-width="1.6"/>
<path d="M197.5 168.5V156.5H203L204.5 158.5H212.5V168.5Z" fill="#fdfdfd" stroke="#333" stroke-width="1.1"/>
<g fill="none" stroke="#333" stroke-width="1.2"><path d="M211 184.5H207.5Q206 184.500 206 183V180Q206 178.5 207.500 178.5H209.5V178Q209.5 176.300 211.500 176.300H215Q217 176.300 217 178V181.500Q217 183 215.500 183H212.5Q211 183 211 184.500V188.500Q211 190.500 213 190.500H216.500Q218.500 190.500 218.500 188.500V188H220.500Q222 188 222 186.500V183.500Q222 182 220.500 182H217"/></g>
<g fill="none" stroke="#333" stroke-width="1.2"><path d="M185.5 270.5V258.5H190L191.5 260.5H196.5V262.5"/><path d="M185.5 270.5L188.5 263.5H201.5L198.5 270.5Z"/><path d="M195 258.500Q197 256.500 200.500 256.500M198.500 254.500L201 256.500L198.500 258.500"/></g>
<path d="M222.5 257.5L233.5 269.5M233.5 257.5L222.5 269.5" stroke="#8ec1ee" stroke-width="1.6" fill="none"/>
<g fill="none" stroke="#2aa24a" stroke-width="1.3"><circle cx="263.3" cy="263.3" r="8.5"/><path d="M258.500 265A5 5 0 0 1 266 259.500M268 262A5 5 0 0 1 260.500 267.500"/><path d="M264.500 257.500L266.500 259.700L264 261.200M262 269.200L260 267.200L262.500 265.500"/></g>
<path d="M181 290.500H189L185 295Z" fill="#333"/>
<path d="M778 315L781.500 311.500L785 315" fill="none" stroke="#444" stroke-width="1.7"/><path d="M778 438.500L781.500 442L785 438.500" fill="none" stroke="#444" stroke-width="1.7"/>
<path d="M185 454.500L181.500 458L185 461.500" fill="none" stroke="#c4c4c4" stroke-width="1.5"/><path d="M763 454.500L766.500 458L763 461.500" fill="none" stroke="#c4c4c4" stroke-width="1.5"/>
<g fill="#b5b5b5"><rect x="786" y="456" width="1.5" height="1.5"/><rect x="783.500" y="458.500" width="1.5" height="1.5"/><rect x="786" y="458.500" width="1.5" height="1.5"/><rect x="781" y="461" width="1.5" height="1.5"/><rect x="783.500" y="461" width="1.5" height="1.5"/><rect x="786" y="461" width="1.5" height="1.5"/></g>
</svg>
<div class="abs" style="left:3px;top:1014.5px;width:1917px;height:1px;background:#e2e2e2"></div>
<div class="abs" style="left:0;top:1037px;width:1920px;height:3px;background:#f8f8f8"></div>
<div class="abs" id="topedge"></div>
<div class="abs" id="leftedge"></div>
</body>
</html>
